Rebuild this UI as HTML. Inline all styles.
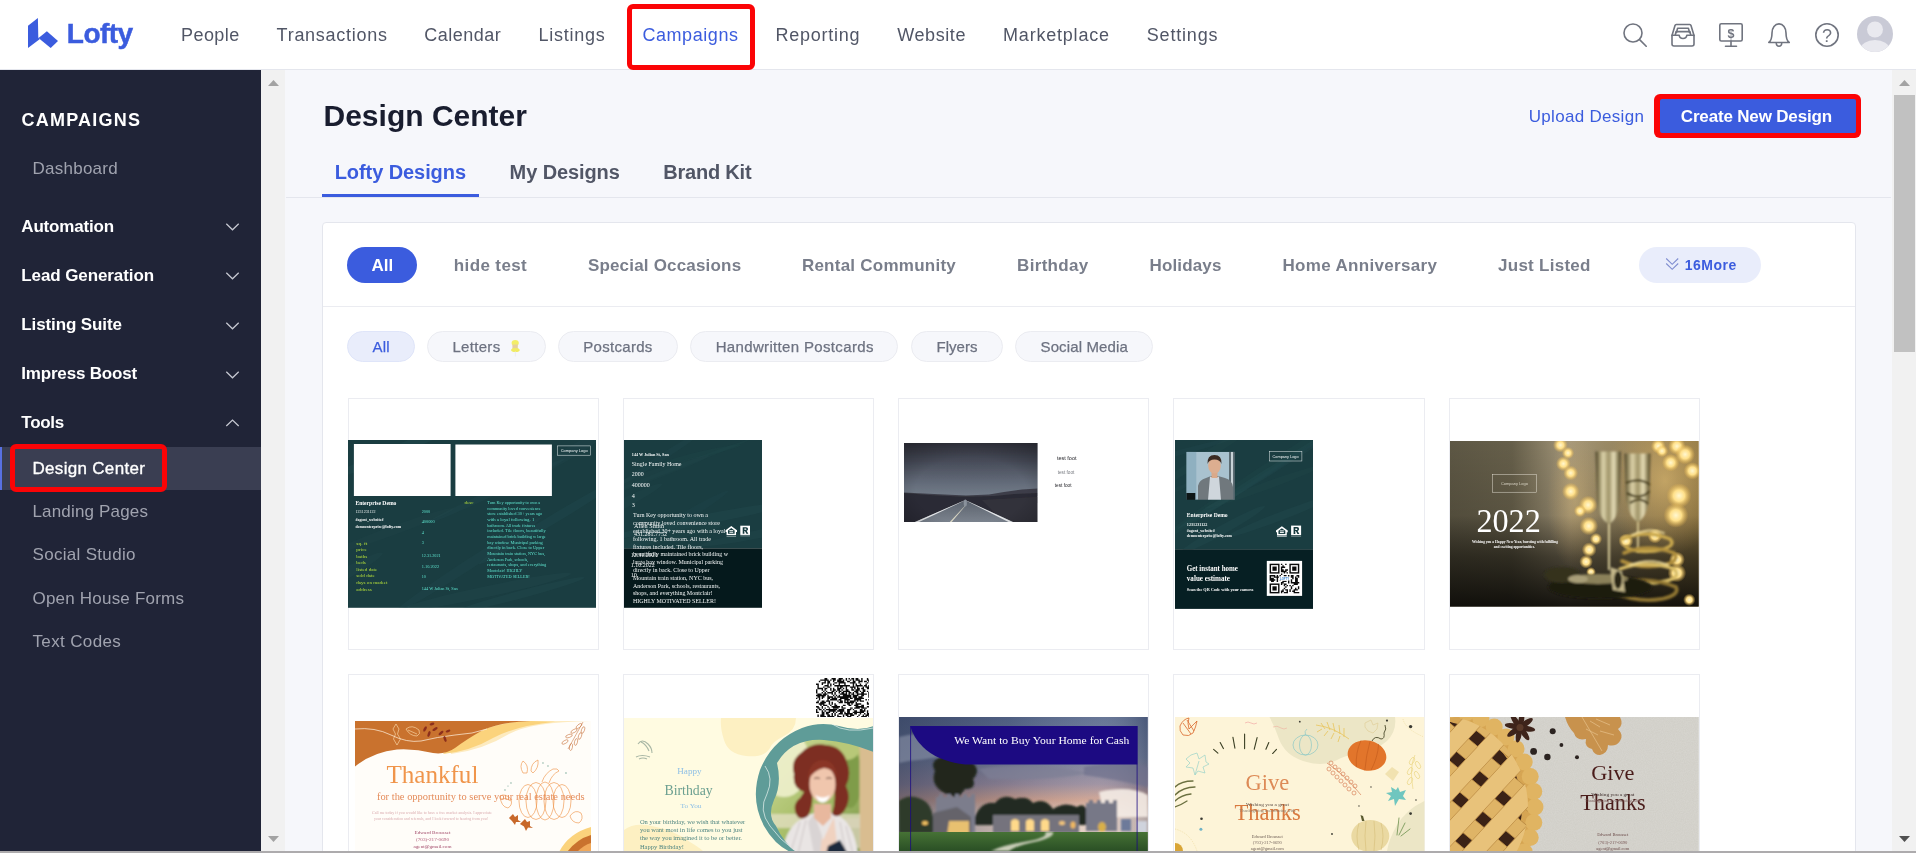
<!DOCTYPE html>
<html lang="en"><head><meta charset="utf-8"><title>Design Center</title>
<style>
html,body{margin:0;padding:0}
body{width:1916px;height:853px;overflow:hidden;position:relative;background:#f6f7fb;font-family:'Liberation Sans',sans-serif;color:#515666}
.abs{position:absolute}
svg{display:block}
</style></head><body>
<div id="app" style="position:absolute;left:0;top:0;width:1916px;height:853px;overflow:hidden;will-change:transform">
<div class="abs" style="left:0;top:0;width:1916px;height:69px;background:#fff;border-bottom:1px solid #e4e6ed"></div><svg class="abs" style="left:0;top:0" width="140" height="69" viewBox="0 0 140 69"><polygon points="28,25.700 37.900,18 38.300,37.500 39.600,39.300 28,48" fill="#3b5cde"/><polygon points="46.900,31.200 58,41 50.700,48 38.500,38" fill="#3b5cde"/></svg><span style="position:absolute;left:66.80px;top:16.00px;font:700 28px/36px 'Liberation Sans',sans-serif;letter-spacing:-0.519px;color:#3b5cde;white-space:pre;-webkit-text-stroke:0.5px #3b5cde;">Lofty</span><span style="position:absolute;left:181.00px;top:24.00px;font:400 18px/23px 'Liberation Sans',sans-serif;letter-spacing:0.443px;color:#515666;white-space:pre;">People</span><span style="position:absolute;left:276.60px;top:24.00px;font:400 18px/23px 'Liberation Sans',sans-serif;letter-spacing:0.733px;color:#515666;white-space:pre;">Transactions</span><span style="position:absolute;left:424.20px;top:24.00px;font:400 18px/23px 'Liberation Sans',sans-serif;letter-spacing:0.500px;color:#515666;white-space:pre;">Calendar</span><span style="position:absolute;left:538.40px;top:24.00px;font:400 18px/23px 'Liberation Sans',sans-serif;letter-spacing:0.769px;color:#515666;white-space:pre;">Listings</span><span style="position:absolute;left:642.40px;top:24.00px;font:400 18px/23px 'Liberation Sans',sans-serif;letter-spacing:0.571px;color:#3b5cde;white-space:pre;">Campaigns</span><span style="position:absolute;left:775.40px;top:24.00px;font:400 18px/23px 'Liberation Sans',sans-serif;letter-spacing:0.759px;color:#515666;white-space:pre;">Reporting</span><span style="position:absolute;left:897.30px;top:24.00px;font:400 18px/23px 'Liberation Sans',sans-serif;letter-spacing:0.569px;color:#515666;white-space:pre;">Website</span><span style="position:absolute;left:1003.10px;top:24.00px;font:400 18px/23px 'Liberation Sans',sans-serif;letter-spacing:0.786px;color:#515666;white-space:pre;">Marketplace</span><span style="position:absolute;left:1146.80px;top:24.00px;font:400 18px/23px 'Liberation Sans',sans-serif;letter-spacing:0.807px;color:#515666;white-space:pre;">Settings</span><div class="abs" style="left:626.8px;top:3.800px;width:128.400px;height:66.600px;box-sizing:border-box;border:5.500px solid #fb0406;border-radius:6px"></div><svg class="abs" style="left:1623px;top:23px" width="24" height="24" viewBox="0 0 24 24" fill="none" stroke="#70747f" stroke-width="1.6" stroke-linecap="round"><circle cx="10" cy="10" r="9"/><path d="M16.6 16.6L23.2 23.2"/></svg><svg class="abs" style="left:1671px;top:23px" width="24" height="24" viewBox="0 0 24 24" fill="none" stroke="#70747f" stroke-width="1.6" stroke-linejoin="round" stroke-linecap="round"><path d="M1 12.5L4 2.5Q4.3 1.5 5.3 1.5H18.7Q19.7 1.5 20 2.5L23 12.5"/><path d="M5.5 9.5L6.6 5.3H17.4L18.5 9.5"/><path d="M4.3 12L5 8.6H19L19.7 12"/><path d="M1 12.3H8.2Q8.5 15.5 12 15.5Q15.5 15.500 15.8 12.3H23V21Q23 23 21 23H3Q1 23 1 21Z"/></svg><svg class="abs" style="left:1719px;top:23px" width="24" height="24" viewBox="0 0 24 24" fill="none" stroke="#70747f" stroke-width="1.6" stroke-linecap="round" stroke-linejoin="round"><rect x="0.8" y="0.8" width="22.4" height="17.2" rx="1.5"/><path d="M12 18V23M6.500 23.2H17.5"/></svg><span style="position:absolute;left:1727.60px;top:26.00px;font:700 12.5px/16px 'Liberation Sans',sans-serif;letter-spacing:0.000px;color:#70747f;white-space:pre;">$</span><svg class="abs" style="left:1767px;top:23px" width="24" height="24" viewBox="0 0 24 24" fill="none" stroke="#70747f" stroke-width="1.6" stroke-linecap="round" stroke-linejoin="round"><path d="M1.800 19.500C4.500 17.500 5 15 5 10C5 4.500 8 0.900 12 0.900C16 0.900 19 4.500 19 10C19 15 19.500 17.500 22.200 19.500Z"/><path d="M9.300 20.500Q9.500 23.200 12 23.200Q14.500 23.200 14.700 20.500"/></svg><svg class="abs" style="left:1815px;top:23px" width="24" height="24" viewBox="0 0 24 24" fill="none" stroke="#70747f" stroke-width="1.6"><circle cx="12" cy="12" r="11.200"/></svg><span style="position:absolute;left:1822.00px;top:25.00px;font:400 18px/23px 'Liberation Sans',sans-serif;letter-spacing:0.000px;color:#70747f;white-space:pre;">?</span><svg class="abs" style="left:1857px;top:16px" width="36" height="36" viewBox="0 0 36 36"><defs><clipPath id="avc"><circle cx="18" cy="18" r="18"/></clipPath></defs><circle cx="18" cy="18" r="18" fill="#c9cad6"/><g clip-path="url(#avc)" fill="#e9e9ef"><circle cx="18" cy="13.500" r="8"/><ellipse cx="18" cy="33" rx="14.500" ry="9"/></g></svg><div class="abs" style="left:0;top:70px;width:261px;height:783px;background:#202437"></div><span style="position:absolute;left:21.50px;top:109.00px;font:700 18px/23px 'Liberation Sans',sans-serif;letter-spacing:1.239px;color:#fff;white-space:pre;">CAMPAIGNS</span><span style="position:absolute;left:32.50px;top:158.00px;font:400 17px/22px 'Liberation Sans',sans-serif;letter-spacing:0.250px;color:#a0a3af;white-space:pre;">Dashboard</span><span style="position:absolute;left:21.30px;top:216.00px;font:700 17px/22px 'Liberation Sans',sans-serif;letter-spacing:-0.183px;color:#fff;white-space:pre;">Automation</span><svg class="abs" style="left:225px;top:222px" width="15" height="10" viewBox="0 0 15 10" fill="none" stroke="#c6c8d1" stroke-width="1.250"><path d="M1.300 1.800L7.500 7.800L13.700 1.800"/></svg><span style="position:absolute;left:21.30px;top:265.00px;font:700 17px/22px 'Liberation Sans',sans-serif;letter-spacing:-0.099px;color:#fff;white-space:pre;">Lead Generation</span><svg class="abs" style="left:225px;top:271px" width="15" height="10" viewBox="0 0 15 10" fill="none" stroke="#c6c8d1" stroke-width="1.250"><path d="M1.300 1.800L7.500 7.800L13.700 1.800"/></svg><span style="position:absolute;left:21.30px;top:314.00px;font:700 17px/22px 'Liberation Sans',sans-serif;letter-spacing:-0.112px;color:#fff;white-space:pre;">Listing Suite</span><svg class="abs" style="left:225px;top:321px" width="15" height="10" viewBox="0 0 15 10" fill="none" stroke="#c6c8d1" stroke-width="1.250"><path d="M1.300 1.800L7.500 7.800L13.700 1.800"/></svg><span style="position:absolute;left:21.30px;top:363.00px;font:700 17px/22px 'Liberation Sans',sans-serif;letter-spacing:-0.191px;color:#fff;white-space:pre;">Impress Boost</span><svg class="abs" style="left:225px;top:370px" width="15" height="10" viewBox="0 0 15 10" fill="none" stroke="#c6c8d1" stroke-width="1.250"><path d="M1.300 1.800L7.500 7.800L13.700 1.800"/></svg><span style="position:absolute;left:21.30px;top:412.00px;font:700 17px/22px 'Liberation Sans',sans-serif;letter-spacing:-0.284px;color:#fff;white-space:pre;">Tools</span><svg class="abs" style="left:225px;top:418px" width="15" height="10" viewBox="0 0 15 10" fill="none" stroke="#c6c8d1" stroke-width="1.250"><path d="M1.300 8L7.500 2L13.700 8"/></svg><div class="abs" style="left:0;top:447px;width:261px;height:43px;background:#3a3e52"></div><div class="abs" style="left:0;top:447px;width:2px;height:43px;background:#5870e2"></div><div class="abs" style="left:9.900px;top:444.200px;width:157px;height:47.600px;box-sizing:border-box;border:5.500px solid #fb0406;border-radius:6px"></div><span style="position:absolute;left:32.50px;top:458.00px;font:400 17px/22px 'Liberation Sans',sans-serif;letter-spacing:0.306px;color:#fff;white-space:pre;-webkit-text-stroke:0.350px #fff;">Design Center</span><span style="position:absolute;left:32.50px;top:501.00px;font:400 17px/22px 'Liberation Sans',sans-serif;letter-spacing:0.165px;color:#a0a3af;white-space:pre;">Landing Pages</span><span style="position:absolute;left:32.50px;top:544.00px;font:400 17px/22px 'Liberation Sans',sans-serif;letter-spacing:0.309px;color:#a0a3af;white-space:pre;">Social Studio</span><span style="position:absolute;left:32.50px;top:588.00px;font:400 17px/22px 'Liberation Sans',sans-serif;letter-spacing:0.204px;color:#a0a3af;white-space:pre;">Open House Forms</span><span style="position:absolute;left:32.50px;top:631.00px;font:400 17px/22px 'Liberation Sans',sans-serif;letter-spacing:0.363px;color:#a0a3af;white-space:pre;">Text Codes</span><div class="abs" style="left:261px;top:70px;width:24px;height:783px;background:#f1f1f1"></div><svg class="abs" style="left:267px;top:79px" width="13" height="8" viewBox="0 0 13 8"><polygon points="6.500,1 12,7 1,7" fill="#a3a3a3"/></svg><svg class="abs" style="left:267px;top:835px" width="13" height="8" viewBox="0 0 13 8"><polygon points="1,1 12,1 6.500,7" fill="#a3a3a3"/></svg><div class="abs" style="left:1892px;top:70px;width:24px;height:783px;background:#f1f1f1"></div><div class="abs" style="left:1894px;top:95px;width:21px;height:257px;background:#c1c1c1"></div><svg class="abs" style="left:1898px;top:79px" width="13" height="8" viewBox="0 0 13 8"><polygon points="6.500,1 12,7 1,7" fill="#a3a3a3"/></svg><svg class="abs" style="left:1898px;top:835px" width="13" height="8" viewBox="0 0 13 8"><polygon points="1,1 12,1 6.500,7" fill="#505050"/></svg><span style="position:absolute;left:323.50px;top:96.00px;font:700 30px/39px 'Liberation Sans',sans-serif;letter-spacing:0.009px;color:#191d2f;white-space:pre;">Design Center</span><span style="position:absolute;left:1528.80px;top:106.00px;font:400 17px/22px 'Liberation Sans',sans-serif;letter-spacing:0.295px;color:#3b5cde;white-space:pre;">Upload Design</span><div class="abs" style="left:1654.400px;top:93.500px;width:206.600px;height:44.200px;background:#fb0406;border-radius:6px"></div><div class="abs" style="left:1660px;top:99px;width:195.500px;height:33.500px;background:#3b5cde;border-radius:2px"></div><span style="position:absolute;left:1680.80px;top:106.00px;font:700 17px/22px 'Liberation Sans',sans-serif;letter-spacing:-0.170px;color:#fff;white-space:pre;">Create New Design</span><div class="abs" style="left:286px;top:197px;width:1605px;height:1px;background:#e4e6ed"></div><div class="abs" style="left:322px;top:194px;width:157px;height:3px;background:#3b5cde"></div><span style="position:absolute;left:334.70px;top:159.00px;font:700 20px/26px 'Liberation Sans',sans-serif;letter-spacing:-0.076px;color:#3b5cde;white-space:pre;">Lofty Designs</span><span style="position:absolute;left:509.60px;top:159.00px;font:700 20px/26px 'Liberation Sans',sans-serif;letter-spacing:-0.101px;color:#515666;white-space:pre;">My Designs</span><span style="position:absolute;left:663.30px;top:159.00px;font:700 20px/26px 'Liberation Sans',sans-serif;letter-spacing:-0.212px;color:#515666;white-space:pre;">Brand Kit</span><div class="abs" style="left:322px;top:222px;width:1532px;height:640px;background:#fff;border:1px solid #e4e6ed;border-radius:4px"></div><div class="abs" style="left:323px;top:306px;width:1532px;height:1px;background:#ebecf1"></div><div class="abs" style="left:347px;top:247px;width:70px;height:36px;border-radius:18px;background:#3b5cde"></div><span style="position:absolute;left:371.50px;top:255.00px;font:700 17px/22px 'Liberation Sans',sans-serif;letter-spacing:-0.054px;color:#fff;white-space:pre;">All</span><span style="position:absolute;left:453.80px;top:255.00px;font:700 17px/22px 'Liberation Sans',sans-serif;letter-spacing:0.376px;color:#797e8b;white-space:pre;">hide test</span><span style="position:absolute;left:587.90px;top:255.00px;font:700 17px/22px 'Liberation Sans',sans-serif;letter-spacing:0.185px;color:#797e8b;white-space:pre;">Special Occasions</span><span style="position:absolute;left:801.90px;top:255.00px;font:700 17px/22px 'Liberation Sans',sans-serif;letter-spacing:0.246px;color:#797e8b;white-space:pre;">Rental Community</span><span style="position:absolute;left:1017.10px;top:255.00px;font:700 17px/22px 'Liberation Sans',sans-serif;letter-spacing:0.311px;color:#797e8b;white-space:pre;">Birthday</span><span style="position:absolute;left:1149.50px;top:255.00px;font:700 17px/22px 'Liberation Sans',sans-serif;letter-spacing:0.152px;color:#797e8b;white-space:pre;">Holidays</span><span style="position:absolute;left:1282.50px;top:255.00px;font:700 17px/22px 'Liberation Sans',sans-serif;letter-spacing:0.316px;color:#797e8b;white-space:pre;">Home Anniversary</span><span style="position:absolute;left:1498.00px;top:255.00px;font:700 17px/22px 'Liberation Sans',sans-serif;letter-spacing:0.271px;color:#797e8b;white-space:pre;">Just Listed</span><div class="abs" style="left:1639px;top:247px;width:122px;height:36px;border-radius:18px;background:#e9edfb"></div><svg class="abs" style="left:1665px;top:257px" width="15" height="14" viewBox="0 0 15 14" fill="none" stroke="#7f8dd0" stroke-width="1.100"><path d="M1.200 1.500L7.200 7.300L13.200 1.500M1.200 6.500L7.200 12.300L13.200 6.500"/></svg><span style="position:absolute;left:1684.70px;top:256.00px;font:700 14px/18px 'Liberation Sans',sans-serif;letter-spacing:0.503px;color:#3b5cde;white-space:pre;">16More</span><div class="abs" style="left:346.6px;top:331px;width:68.5px;height:31px;border-radius:16px;background:#e9edfb;box-sizing:border-box;border:1px solid #dfe5f9"></div><span style="position:absolute;left:372.50px;top:337.00px;font:400 15px/20px 'Liberation Sans',sans-serif;letter-spacing:0.171px;color:#3b5cde;white-space:pre;-webkit-text-stroke:0.250px currentColor;">All</span><div class="abs" style="left:427.2px;top:331px;width:118.8px;height:31px;border-radius:16px;background:#f6f7fb;box-sizing:border-box;border:1px solid #ebecf1"></div><span style="position:absolute;left:452.40px;top:337.00px;font:400 15px/20px 'Liberation Sans',sans-serif;letter-spacing:0.314px;color:#6d7281;white-space:pre;-webkit-text-stroke:0.250px currentColor;">Letters</span><div class="abs" style="left:557.8px;top:331px;width:119.9px;height:31px;border-radius:16px;background:#f6f7fb;box-sizing:border-box;border:1px solid #ebecf1"></div><span style="position:absolute;left:583.30px;top:337.00px;font:400 15px/20px 'Liberation Sans',sans-serif;letter-spacing:0.294px;color:#6d7281;white-space:pre;-webkit-text-stroke:0.250px currentColor;">Postcards</span><div class="abs" style="left:690.1px;top:331px;width:208.3px;height:31px;border-radius:16px;background:#f6f7fb;box-sizing:border-box;border:1px solid #ebecf1"></div><span style="position:absolute;left:715.70px;top:337.00px;font:400 15px/20px 'Liberation Sans',sans-serif;letter-spacing:0.341px;color:#6d7281;white-space:pre;-webkit-text-stroke:0.250px currentColor;">Handwritten Postcards</span><div class="abs" style="left:910.7px;top:331px;width:92.2px;height:31px;border-radius:16px;background:#f6f7fb;box-sizing:border-box;border:1px solid #ebecf1"></div><span style="position:absolute;left:936.60px;top:337.00px;font:400 15px/20px 'Liberation Sans',sans-serif;letter-spacing:-0.008px;color:#6d7281;white-space:pre;-webkit-text-stroke:0.250px currentColor;">Flyers</span><div class="abs" style="left:1014.6px;top:331px;width:138.4px;height:31px;border-radius:16px;background:#f6f7fb;box-sizing:border-box;border:1px solid #ebecf1"></div><span style="position:absolute;left:1040.50px;top:337.00px;font:400 15px/20px 'Liberation Sans',sans-serif;letter-spacing:0.123px;color:#6d7281;white-space:pre;-webkit-text-stroke:0.250px currentColor;">Social Media</span><svg class="abs" style="left:509px;top:338px" width="13" height="20" viewBox="0 0 13 20"><defs><filter id="pinb"><feGaussianBlur stdDeviation="0.500"/></filter></defs><g filter="url(#pinb)" opacity="0.850"><ellipse cx="6.200" cy="5" rx="3.600" ry="3" fill="#f3ec4e"/><rect x="3.400" y="6.500" width="5.400" height="4.500" fill="#e3c98c"/><ellipse cx="6.400" cy="12" rx="4.300" ry="2" fill="#f1ea48"/><rect x="5.800" y="13.500" width="1" height="5" fill="#e9e9ee"/></g></svg><div class="abs" style="left:347.5px;top:398px;width:251.3px;height:252px;box-sizing:border-box;border:1px solid #ebecf1;background:#fff"></div><div class="abs" style="left:622.8px;top:398px;width:251.3px;height:252px;box-sizing:border-box;border:1px solid #ebecf1;background:#fff"></div><div class="abs" style="left:898.1px;top:398px;width:251.3px;height:252px;box-sizing:border-box;border:1px solid #ebecf1;background:#fff"></div><div class="abs" style="left:1173.4px;top:398px;width:251.3px;height:252px;box-sizing:border-box;border:1px solid #ebecf1;background:#fff"></div><div class="abs" style="left:1448.7px;top:398px;width:251.3px;height:252px;box-sizing:border-box;border:1px solid #ebecf1;background:#fff"></div><div class="abs" style="left:347.5px;top:674px;width:251.3px;height:252px;box-sizing:border-box;border:1px solid #ebecf1;background:#fff"></div><div class="abs" style="left:622.8px;top:674px;width:251.3px;height:252px;box-sizing:border-box;border:1px solid #ebecf1;background:#fff"></div><div class="abs" style="left:898.1px;top:674px;width:251.3px;height:252px;box-sizing:border-box;border:1px solid #ebecf1;background:#fff"></div><div class="abs" style="left:1173.4px;top:674px;width:251.3px;height:252px;box-sizing:border-box;border:1px solid #ebecf1;background:#fff"></div><div class="abs" style="left:1448.7px;top:674px;width:251.3px;height:252px;box-sizing:border-box;border:1px solid #ebecf1;background:#fff"></div><svg class="abs" style="left:348.0px;top:440.0px" width="248.2" height="167.8" viewBox="0 0 248.2 167.8" ><rect width="248.200" height="167.800" fill="#1a3d41"/><ellipse cx="44" cy="91" rx="66" ry="4.5" transform="rotate(-20 44 91)" fill="#2a5358" opacity="0.11"/><ellipse cx="-16" cy="141" rx="58" ry="6.0" transform="rotate(-29 -16 141)" fill="#2a5358" opacity="0.16"/><ellipse cx="204" cy="80" rx="85" ry="4.5" transform="rotate(-31 204 80)" fill="#2a5358" opacity="0.20"/><ellipse cx="120" cy="125" rx="87" ry="5.0" transform="rotate(-33 120 125)" fill="#2a5358" opacity="0.17"/><ellipse cx="61" cy="5" rx="101" ry="4.9" transform="rotate(-23 61 5)" fill="#2a5358" opacity="0.21"/><ellipse cx="171" cy="155" rx="68" ry="3.8" transform="rotate(-15 171 155)" fill="#2a5358" opacity="0.21"/><ellipse cx="216" cy="16" rx="50" ry="5.9" transform="rotate(-30 216 16)" fill="#2a5358" opacity="0.15"/><ellipse cx="148" cy="51" rx="76" ry="3.4" transform="rotate(-25 148 51)" fill="#2a5358" opacity="0.17"/><ellipse cx="137" cy="152" rx="88" ry="5.4" transform="rotate(-12 137 152)" fill="#2a5358" opacity="0.22"/><rect x="5.900" y="4" width="96.700" height="52" fill="#fff"/><rect x="107.400" y="4.500" width="96.500" height="51.500" fill="#fff"/><rect x="209.700" y="5.900" width="33" height="9.300" fill="none" stroke="#e8efef" stroke-width="0.500"/><text x="226.2" y="12.1" font-size="4.2" font-family="Liberation Sans, sans-serif" fill="#f2f6f6" textLength="27.0" lengthAdjust="spacingAndGlyphs" text-anchor="middle" >Company Logo</text><text x="7.4" y="64.6" font-size="6.3" font-family="Liberation Serif, serif" fill="#fff" font-weight="700" textLength="41.0" lengthAdjust="spacingAndGlyphs" >Enterprise Demo</text><text x="7.6" y="72.6" font-size="3.8" font-family="Liberation Serif, serif" fill="#f0f5f5" textLength="20.0" lengthAdjust="spacingAndGlyphs" >1231231122</text><text x="7.6" y="81.2" font-size="3.8" font-family="Liberation Serif, serif" fill="#fff" font-weight="700" textLength="28.0" lengthAdjust="spacingAndGlyphs" >#agent_website#</text><text x="7.6" y="88.0" font-size="3.8" font-family="Liberation Serif, serif" fill="#fff" font-weight="700" textLength="45.5" lengthAdjust="spacingAndGlyphs" >demoenterprise@lofty.com</text><text x="8.3" y="104.7" font-size="4.3" font-family="Liberation Serif, serif" fill="#b7e23a" textLength="11.0" lengthAdjust="spacingAndGlyphs" >sq. ft</text><text x="8.3" y="111.2" font-size="4.3" font-family="Liberation Serif, serif" fill="#b7e23a" textLength="10.5" lengthAdjust="spacingAndGlyphs" >price</text><text x="8.3" y="117.7" font-size="4.3" font-family="Liberation Serif, serif" fill="#b7e23a" textLength="11.0" lengthAdjust="spacingAndGlyphs" >baths</text><text x="8.3" y="124.3" font-size="4.3" font-family="Liberation Serif, serif" fill="#b7e23a" textLength="9.5" lengthAdjust="spacingAndGlyphs" >beds</text><text x="8.3" y="130.9" font-size="4.3" font-family="Liberation Serif, serif" fill="#b7e23a" textLength="21.0" lengthAdjust="spacingAndGlyphs" >listed date</text><text x="8.3" y="137.4" font-size="4.3" font-family="Liberation Serif, serif" fill="#b7e23a" textLength="18.5" lengthAdjust="spacingAndGlyphs" >sold date</text><text x="8.3" y="144.1" font-size="4.3" font-family="Liberation Serif, serif" fill="#b7e23a" textLength="31.0" lengthAdjust="spacingAndGlyphs" >days on market</text><text x="8.3" y="150.7" font-size="4.3" font-family="Liberation Serif, serif" fill="#b7e23a" textLength="15.5" lengthAdjust="spacingAndGlyphs" >address</text><text x="73.7" y="72.7" font-size="4.2" font-family="Liberation Serif, serif" fill="#5fe6d0" textLength="8.5" lengthAdjust="spacingAndGlyphs" >2000</text><text x="73.7" y="83.0" font-size="4.2" font-family="Liberation Serif, serif" fill="#5fe6d0" textLength="13.0" lengthAdjust="spacingAndGlyphs" >400000</text><text x="73.7" y="93.9" font-size="4.2" font-family="Liberation Serif, serif" fill="#5fe6d0" >4</text><text x="73.7" y="104.4" font-size="4.2" font-family="Liberation Serif, serif" fill="#5fe6d0" >3</text><text x="73.7" y="117.4" font-size="4.2" font-family="Liberation Serif, serif" fill="#5fe6d0" textLength="19.0" lengthAdjust="spacingAndGlyphs" >12.31.2021</text><text x="73.7" y="127.7" font-size="4.2" font-family="Liberation Serif, serif" fill="#5fe6d0" textLength="17.5" lengthAdjust="spacingAndGlyphs" >1.10.2022</text><text x="73.7" y="137.9" font-size="4.2" font-family="Liberation Serif, serif" fill="#5fe6d0" >10</text><text x="73.7" y="150.4" font-size="4.2" font-family="Liberation Serif, serif" fill="#5fe6d0" textLength="36.0" lengthAdjust="spacingAndGlyphs" >144 W Julian St, San</text><text x="116.6" y="64.5" font-size="4.3" font-family="Liberation Serif, serif" fill="#b7e23a" textLength="9.0" lengthAdjust="spacingAndGlyphs" >desc</text><text x="139.3" y="64.0" font-size="4.3" font-family="Liberation Serif, serif" fill="#5fe6d0" textLength="53.0" lengthAdjust="spacingAndGlyphs" >Turn Key opportunity to own a</text><text x="139.3" y="69.7" font-size="4.3" font-family="Liberation Serif, serif" fill="#5fe6d0" textLength="53.5" lengthAdjust="spacingAndGlyphs" >community loved convenience</text><text x="139.3" y="75.3" font-size="4.3" font-family="Liberation Serif, serif" fill="#5fe6d0" textLength="55.0" lengthAdjust="spacingAndGlyphs" >store established 30+ years ago</text><text x="139.3" y="81.0" font-size="4.3" font-family="Liberation Serif, serif" fill="#5fe6d0" textLength="47.0" lengthAdjust="spacingAndGlyphs" >with a loyal following. 1</text><text x="139.3" y="86.7" font-size="4.3" font-family="Liberation Serif, serif" fill="#5fe6d0" textLength="48.0" lengthAdjust="spacingAndGlyphs" >bathroom. All trade fixtures</text><text x="139.3" y="92.3" font-size="4.3" font-family="Liberation Serif, serif" fill="#5fe6d0" textLength="58.5" lengthAdjust="spacingAndGlyphs" >included. Tile floors, beautifully</text><text x="139.3" y="98.0" font-size="4.3" font-family="Liberation Serif, serif" fill="#5fe6d0" textLength="58.5" lengthAdjust="spacingAndGlyphs" >maintained brick building w large</text><text x="139.3" y="103.7" font-size="4.3" font-family="Liberation Serif, serif" fill="#5fe6d0" textLength="55.5" lengthAdjust="spacingAndGlyphs" >bay window. Municipal parking</text><text x="139.3" y="109.4" font-size="4.3" font-family="Liberation Serif, serif" fill="#5fe6d0" textLength="57.0" lengthAdjust="spacingAndGlyphs" >directly in back. Close to Upper</text><text x="139.3" y="115.0" font-size="4.3" font-family="Liberation Serif, serif" fill="#5fe6d0" textLength="58.0" lengthAdjust="spacingAndGlyphs" >Mountain train station, NYC bus,</text><text x="139.3" y="120.7" font-size="4.3" font-family="Liberation Serif, serif" fill="#5fe6d0" textLength="41.0" lengthAdjust="spacingAndGlyphs" >Anderson Park, schools,</text><text x="139.3" y="126.4" font-size="4.3" font-family="Liberation Serif, serif" fill="#5fe6d0" textLength="59.0" lengthAdjust="spacingAndGlyphs" >restaurants, shops, and everything</text><text x="139.3" y="132.0" font-size="4.3" font-family="Liberation Serif, serif" fill="#5fe6d0" textLength="35.0" lengthAdjust="spacingAndGlyphs" >Montclair! HIGHLY</text><text x="139.3" y="137.7" font-size="4.3" font-family="Liberation Serif, serif" fill="#5fe6d0" textLength="42.5" lengthAdjust="spacingAndGlyphs" >MOTIVATED SELLER!</text></svg><svg class="abs" style="left:624.0px;top:440.0px" width="138.3" height="167.8" viewBox="0 0 138.3 167.8" ><rect width="138.300" height="108.500" fill="#1a3d41"/><ellipse cx="78" cy="80" rx="96" ry="5.0" transform="rotate(-11 78 80)" fill="#2a5358" opacity="0.21"/><ellipse cx="-15" cy="50" rx="106" ry="5.6" transform="rotate(-19 -15 50)" fill="#2a5358" opacity="0.11"/><ellipse cx="54" cy="27" rx="78" ry="2.1" transform="rotate(-21 54 27)" fill="#2a5358" opacity="0.13"/><ellipse cx="24" cy="99" rx="94" ry="5.2" transform="rotate(-31 24 99)" fill="#2a5358" opacity="0.12"/><ellipse cx="78" cy="14" rx="40" ry="2.8" transform="rotate(-13 78 14)" fill="#2a5358" opacity="0.13"/><ellipse cx="135" cy="94" rx="60" ry="4.2" transform="rotate(-11 135 94)" fill="#2a5358" opacity="0.18"/><ellipse cx="12" cy="102" rx="88" ry="5.6" transform="rotate(-11 12 102)" fill="#2a5358" opacity="0.14"/><ellipse cx="37" cy="18" rx="50" ry="3.2" transform="rotate(-33 37 18)" fill="#2a5358" opacity="0.17"/><ellipse cx="-19" cy="73" rx="64" ry="5.3" transform="rotate(-27 -19 73)" fill="#2a5358" opacity="0.16"/><rect y="108.400" width="138.300" height="59.400" fill="#05191c"/><text x="7.8" y="16.0" font-size="4.2" font-family="Liberation Serif, serif" fill="#f4f7f7" font-weight="700" textLength="37.0" lengthAdjust="spacingAndGlyphs" >144 W Julian St, San</text><text x="7.8" y="25.8" font-size="6.4" font-family="Liberation Serif, serif" fill="#f4f7f7" textLength="49.7" lengthAdjust="spacingAndGlyphs" >Single Family Home</text><text x="7.8" y="36.4" font-size="6.2" font-family="Liberation Serif, serif" fill="#f4f7f7" textLength="11.8" lengthAdjust="spacingAndGlyphs" >2000</text><text x="7.8" y="47.1" font-size="6.2" font-family="Liberation Serif, serif" fill="#f4f7f7" textLength="18.0" lengthAdjust="spacingAndGlyphs" >400000</text><text x="7.8" y="57.6" font-size="6.2" font-family="Liberation Serif, serif" fill="#f4f7f7" >4</text><text x="7.8" y="67.2" font-size="6.2" font-family="Liberation Serif, serif" fill="#f4f7f7" >3</text><text x="9.0" y="77.4" font-size="6.3" font-family="Liberation Serif, serif" fill="#f4f7f7" textLength="75.0" lengthAdjust="spacingAndGlyphs" >Turn Key opportunity to own a</text><text x="9.0" y="85.2" font-size="6.3" font-family="Liberation Serif, serif" fill="#f4f7f7" textLength="87.0" lengthAdjust="spacingAndGlyphs" >community loved convenience store</text><text x="9.0" y="93.0" font-size="6.3" font-family="Liberation Serif, serif" fill="#f4f7f7" textLength="92.5" lengthAdjust="spacingAndGlyphs" >established 30+ years ago with a loyal</text><text x="9.0" y="100.8" font-size="6.3" font-family="Liberation Serif, serif" fill="#f4f7f7" textLength="78.0" lengthAdjust="spacingAndGlyphs" >following. 1 bathroom. All trade</text><text x="9.0" y="108.6" font-size="6.3" font-family="Liberation Serif, serif" fill="#f4f7f7" textLength="70.0" lengthAdjust="spacingAndGlyphs" >fixtures included. Tile floors,</text><text x="9.0" y="116.4" font-size="6.3" font-family="Liberation Serif, serif" fill="#f4f7f7" textLength="95.0" lengthAdjust="spacingAndGlyphs" >beautifully maintained brick building w</text><text x="9.0" y="124.2" font-size="6.3" font-family="Liberation Serif, serif" fill="#f4f7f7" textLength="90.0" lengthAdjust="spacingAndGlyphs" >large bay window. Municipal parking</text><text x="9.0" y="132.0" font-size="6.3" font-family="Liberation Serif, serif" fill="#f4f7f7" textLength="76.5" lengthAdjust="spacingAndGlyphs" >directly in back. Close to Upper</text><text x="9.0" y="139.8" font-size="6.3" font-family="Liberation Serif, serif" fill="#f4f7f7" textLength="80.0" lengthAdjust="spacingAndGlyphs" >Mountain train station, NYC bus,</text><text x="9.0" y="147.6" font-size="6.3" font-family="Liberation Serif, serif" fill="#f4f7f7" textLength="87.0" lengthAdjust="spacingAndGlyphs" >Anderson Park, schools, restaurants,</text><text x="9.0" y="155.4" font-size="6.3" font-family="Liberation Serif, serif" fill="#f4f7f7" textLength="79.5" lengthAdjust="spacingAndGlyphs" >shops, and everything Montclair!</text><text x="9.0" y="163.2" font-size="6.3" font-family="Liberation Serif, serif" fill="#f4f7f7" textLength="83.0" lengthAdjust="spacingAndGlyphs" >HIGHLY MOTIVATED SELLER!</text><text x="10.0" y="88.0" font-size="6.2" font-family="Liberation Serif, serif" fill="#f4f7f7" textLength="30.0" lengthAdjust="spacingAndGlyphs" >Allen Smith</text><text x="10.0" y="96.5" font-size="6.2" font-family="Liberation Serif, serif" fill="#f4f7f7" textLength="33.0" lengthAdjust="spacingAndGlyphs" >431.281.7752</text><text x="6.7" y="117.2" font-size="6.2" font-family="Liberation Serif, serif" fill="#f4f7f7" textLength="27.0" lengthAdjust="spacingAndGlyphs" >12.31.2021</text><text x="6.7" y="127.0" font-size="6.2" font-family="Liberation Serif, serif" fill="#f4f7f7" textLength="24.0" lengthAdjust="spacingAndGlyphs" >1.10.2022</text><text x="6.7" y="137.0" font-size="6.2" font-family="Liberation Serif, serif" fill="#f4f7f7" >10</text><g transform="translate(101.6 86.1) scale(0.95)" fill="#fff"><path d="M6 0L12 4.500V6.200H11V9.500H1V6.200H0V4.500ZM6 2L2.500 4.700V8H9.500V4.700Z" fill-rule="evenodd"/><rect x="4" y="4.300" width="4" height="1"/><rect x="4" y="6" width="4" height="1"/><rect x="1" y="10.200" width="10" height="0.800" opacity="0.700"/></g><g transform="translate(116.3 85.7) scale(0.97)"><rect x="0" y="0" width="10" height="9.500" fill="#fff"/><path d="M2.500 1.500H6Q8 1.500 8 3.500Q8 5 6.500 5.300L8.300 8.300H6.300L4.800 5.500H4.200V8.300H2.500ZM4.200 2.800V4.300H5.600Q6.300 4.300 6.300 3.550Q6.300 2.800 5.600 2.800Z" fill="#163a3e" fill-rule="evenodd"/><rect x="0" y="10.200" width="10" height="0.700" fill="#fff" opacity="0.600"/></g></svg><svg class="abs" style="left:904.3px;top:442.6px" width="133.6" height="79.2" viewBox="0 0 133.6 79.2" ><defs><linearGradient id="c3s" x1="0" y1="0" x2="0" y2="1"><stop offset="0" stop-color="#32333e"/><stop offset="0.350" stop-color="#454956"/><stop offset="0.750" stop-color="#626a78"/><stop offset="1" stop-color="#737c89"/></linearGradient><linearGradient id="c3r" x1="0" y1="0" x2="0" y2="1"><stop offset="0" stop-color="#5b626d"/><stop offset="1" stop-color="#7b838e"/></linearGradient><radialGradient id="c3v" cx="0.500" cy="0.600" r="0.750"><stop offset="0.550" stop-color="#000" stop-opacity="0"/><stop offset="1" stop-color="#000" stop-opacity="0.280"/></radialGradient><filter id="b3" x="-5%" y="-5%" width="110%" height="110%"><feGaussianBlur stdDeviation="0.450"/></filter><clipPath id="c3c"><rect width="133.600" height="79.200"/></clipPath></defs><g clip-path="url(#c3c)"><g filter="url(#b3)"><rect x="-3" y="-3" width="140" height="56" fill="url(#c3s)"/><path d="M0 49.500L30 51L62 52.500L85 51.500L100 49L118 46.500L133.600 45.500V60H0Z" fill="#3d3e49"/><path d="M0 50L25 52L55 53.500L70 53.500L90 53L110 51L133.600 50V84H-4V50Z" fill="#2c2b34"/><path d="M78 57L133.600 54V79.200H100Z" fill="#33323b"/><path d="M60.300 57.500L62.300 57.500L109.500 79.200H10.300Z" fill="url(#c3r)"/><path d="M60.300 57.500L10.300 79.200H14.500L60.800 57.500Z" fill="#e6e8ea"/><path d="M62.300 57.500L109.500 79.200H105L61.800 57.500Z" fill="#e6e8ea"/><path d="M60.800 63L45.500 79.200H47.500L61.200 63Z" fill="#d9d6c4"/><ellipse cx="61.300" cy="60" rx="1.600" ry="3.500" fill="#8a929c"/></g><rect width="133.600" height="79.200" fill="url(#c3v)"/></g></svg><svg class="abs" style="left:1050.0px;top:452.0px" width="40.0" height="40.0" viewBox="0 0 40.0 40.0" ><text x="6.9" y="8.2" font-size="5.2" font-family="Liberation Sans, sans-serif" fill="#26262b" textLength="19.6" lengthAdjust="spacingAndGlyphs" >test foot</text><text x="7.7" y="22.1" font-size="4.6" font-family="Liberation Sans, sans-serif" fill="#777a80" textLength="16.7" lengthAdjust="spacingAndGlyphs" >test foot</text><text x="4.8" y="35.1" font-size="4.6" font-family="Liberation Sans, sans-serif" fill="#26262b" textLength="16.7" lengthAdjust="spacingAndGlyphs" >test foot</text></svg><svg class="abs" style="left:1175.0px;top:440.0px" width="138.0" height="168.9" viewBox="0 0 138.0 168.9" ><defs><clipPath id="c4p"><rect x="11.300" y="11.800" width="48.500" height="48"/></clipPath><filter id="b4" x="-10%" y="-10%" width="120%" height="120%"><feGaussianBlur stdDeviation="0.450"/></filter></defs><rect width="138" height="109.500" fill="#1a3d41"/><ellipse cx="31" cy="16" rx="86" ry="4.1" transform="rotate(-33 31 16)" fill="#2a5358" opacity="0.14"/><ellipse cx="-11" cy="55" rx="43" ry="2.3" transform="rotate(-24 -11 55)" fill="#2a5358" opacity="0.11"/><ellipse cx="47" cy="90" rx="49" ry="4.5" transform="rotate(-29 47 90)" fill="#2a5358" opacity="0.21"/><ellipse cx="71" cy="43" rx="108" ry="5.4" transform="rotate(-34 71 43)" fill="#2a5358" opacity="0.13"/><ellipse cx="3" cy="13" rx="62" ry="2.7" transform="rotate(-15 3 13)" fill="#2a5358" opacity="0.17"/><ellipse cx="81" cy="41" rx="78" ry="2.2" transform="rotate(-33 81 41)" fill="#2a5358" opacity="0.12"/><ellipse cx="88" cy="47" rx="62" ry="3.8" transform="rotate(-20 88 47)" fill="#2a5358" opacity="0.14"/><ellipse cx="106" cy="76" rx="57" ry="4.1" transform="rotate(-21 106 76)" fill="#2a5358" opacity="0.21"/><ellipse cx="95" cy="31" rx="109" ry="3.7" transform="rotate(-32 95 31)" fill="#2a5358" opacity="0.19"/><rect y="109.300" width="138" height="59.600" fill="#061f23"/><g clip-path="url(#c4p)"><g filter="url(#b4)"><rect x="11.300" y="11.800" width="48.500" height="48" fill="#a9c2cf"/><rect x="11.300" y="11.800" width="10" height="48" fill="#8fb0c0"/><rect x="54" y="11.800" width="6" height="48" fill="#5d6c73"/><rect x="56" y="11.800" width="2" height="48" fill="#c8d2d6"/><rect x="11.300" y="53" width="9" height="7" fill="#0d1318"/><path d="M23 60V46Q24 40 31 38L36 36H43L50 38Q57 40 58 47V60Z" fill="#6f787d"/><path d="M35 36.500L39.500 38L44 36.500L46 60H33Z" fill="#cfd6dc"/><rect x="36.500" y="30" width="6" height="8" fill="#d9a98a"/><ellipse cx="39.500" cy="25.500" rx="6.300" ry="8" fill="#dcae90"/><path d="M32.500 24Q32 15 39.500 15Q47 15 46.500 24Q45 19.500 39.500 19.500Q34 19.500 32.500 24Z" fill="#3a2a22"/></g></g><rect x="94.300" y="11.300" width="32.600" height="9.700" fill="none" stroke="#e8efef" stroke-width="0.500"/><text x="110.6" y="17.6" font-size="4.2" font-family="Liberation Sans, sans-serif" fill="#f2f6f6" textLength="26.0" lengthAdjust="spacingAndGlyphs" text-anchor="middle" >Company Logo</text><text x="11.8" y="76.7" font-size="6.3" font-family="Liberation Serif, serif" fill="#fff" font-weight="700" textLength="40.8" lengthAdjust="spacingAndGlyphs" >Enterprise Demo</text><text x="11.8" y="86.0" font-size="3.8" font-family="Liberation Serif, serif" fill="#f0f5f5" font-weight="700" textLength="20.6" lengthAdjust="spacingAndGlyphs" >1231231122</text><text x="11.8" y="91.8" font-size="3.8" font-family="Liberation Serif, serif" fill="#fff" font-weight="700" textLength="28.0" lengthAdjust="spacingAndGlyphs" >#agent_website#</text><text x="11.8" y="97.1" font-size="3.8" font-family="Liberation Serif, serif" fill="#fff" font-weight="700" textLength="44.9" lengthAdjust="spacingAndGlyphs" >demoenterprise@lofty.com</text><g transform="translate(101.0 86.2) scale(0.98)" fill="#fff"><path d="M6 0L12 4.500V6.200H11V9.500H1V6.200H0V4.500ZM6 2L2.500 4.700V8H9.500V4.700Z" fill-rule="evenodd"/><rect x="4" y="4.300" width="4" height="1"/><rect x="4" y="6" width="4" height="1"/><rect x="1" y="10.200" width="10" height="0.800" opacity="0.700"/></g><g transform="translate(116.1 85.6) scale(1.00)"><rect x="0" y="0" width="10" height="9.500" fill="#fff"/><path d="M2.500 1.500H6Q8 1.500 8 3.500Q8 5 6.500 5.300L8.300 8.300H6.300L4.800 5.500H4.200V8.300H2.500ZM4.200 2.800V4.300H5.600Q6.300 4.300 6.300 3.550Q6.300 2.800 5.600 2.800Z" fill="#163a3e" fill-rule="evenodd"/><rect x="0" y="10.200" width="10" height="0.700" fill="#fff" opacity="0.600"/></g><text x="11.8" y="131.2" font-size="7.4" font-family="Liberation Serif, serif" fill="#fff" font-weight="700" textLength="51.1" lengthAdjust="spacingAndGlyphs" >Get instant home</text><text x="11.8" y="141.1" font-size="7.4" font-family="Liberation Serif, serif" fill="#fff" font-weight="700" textLength="43.2" lengthAdjust="spacingAndGlyphs" >value estimate</text><text x="11.8" y="151.1" font-size="4.2" font-family="Liberation Serif, serif" fill="#fff" font-weight="700" textLength="66.6" lengthAdjust="spacingAndGlyphs" >Scan the QR Code with your camera</text><rect x="91.800" y="120.900" width="35.300" height="35" fill="#fff"/><path d="M105.92 123.72h1.41v1.41h-1.41zM110.16 123.72h1.41v1.41h-1.41zM107.33 125.14h1.41v1.41h-1.41zM105.92 126.55h1.41v1.41h-1.41zM107.33 126.55h1.41v1.41h-1.41zM108.74 126.55h1.41v1.41h-1.41zM105.92 127.96h1.41v1.41h-1.41zM105.92 129.37h1.41v1.41h-1.41zM107.33 129.37h1.41v1.41h-1.41zM110.16 129.37h1.41v1.41h-1.41zM111.57 129.37h1.41v1.41h-1.41zM105.92 130.78h1.41v1.41h-1.41zM107.33 130.78h1.41v1.41h-1.41zM108.74 130.78h1.41v1.41h-1.41zM110.16 130.78h1.41v1.41h-1.41zM108.74 132.20h1.41v1.41h-1.41zM111.57 132.20h1.41v1.41h-1.41zM105.92 133.61h1.41v1.41h-1.41zM94.62 135.02h1.41v1.41h-1.41zM96.04 135.02h1.41v1.41h-1.41zM97.45 135.02h1.41v1.41h-1.41zM98.86 135.02h1.41v1.41h-1.41zM101.68 135.02h1.41v1.41h-1.41zM104.51 135.02h1.41v1.41h-1.41zM108.74 135.02h1.41v1.41h-1.41zM110.16 135.02h1.41v1.41h-1.41zM112.98 135.02h1.41v1.41h-1.41zM115.80 135.02h1.41v1.41h-1.41zM117.22 135.02h1.41v1.41h-1.41zM121.45 135.02h1.41v1.41h-1.41zM122.86 135.02h1.41v1.41h-1.41zM94.62 136.43h1.41v1.41h-1.41zM98.86 136.43h1.41v1.41h-1.41zM100.27 136.43h1.41v1.41h-1.41zM101.68 136.43h1.41v1.41h-1.41zM103.10 136.43h1.41v1.41h-1.41zM112.98 136.43h1.41v1.41h-1.41zM115.80 136.43h1.41v1.41h-1.41zM117.22 136.43h1.41v1.41h-1.41zM120.04 136.43h1.41v1.41h-1.41zM122.86 136.43h1.41v1.41h-1.41zM94.62 137.84h1.41v1.41h-1.41zM96.04 137.84h1.41v1.41h-1.41zM97.45 137.84h1.41v1.41h-1.41zM101.68 137.84h1.41v1.41h-1.41zM104.51 137.84h1.41v1.41h-1.41zM112.98 137.84h1.41v1.41h-1.41zM117.22 137.84h1.41v1.41h-1.41zM120.04 137.84h1.41v1.41h-1.41zM121.45 137.84h1.41v1.41h-1.41zM94.62 139.26h1.41v1.41h-1.41zM96.04 139.26h1.41v1.41h-1.41zM97.45 139.26h1.41v1.41h-1.41zM98.86 139.26h1.41v1.41h-1.41zM101.68 139.26h1.41v1.41h-1.41zM104.51 139.26h1.41v1.41h-1.41zM112.98 139.26h1.41v1.41h-1.41zM115.80 139.26h1.41v1.41h-1.41zM120.04 139.26h1.41v1.41h-1.41zM121.45 139.26h1.41v1.41h-1.41zM96.04 140.67h1.41v1.41h-1.41zM97.45 140.67h1.41v1.41h-1.41zM101.68 140.67h1.41v1.41h-1.41zM107.33 140.67h1.41v1.41h-1.41zM108.74 140.67h1.41v1.41h-1.41zM110.16 140.67h1.41v1.41h-1.41zM112.98 140.67h1.41v1.41h-1.41zM115.80 140.67h1.41v1.41h-1.41zM120.04 140.67h1.41v1.41h-1.41zM121.45 140.67h1.41v1.41h-1.41zM105.92 142.08h1.41v1.41h-1.41zM107.33 142.08h1.41v1.41h-1.41zM112.98 142.08h1.41v1.41h-1.41zM115.80 142.08h1.41v1.41h-1.41zM117.22 142.08h1.41v1.41h-1.41zM118.63 142.08h1.41v1.41h-1.41zM120.04 142.08h1.41v1.41h-1.41zM121.45 142.08h1.41v1.41h-1.41zM122.86 142.08h1.41v1.41h-1.41zM105.92 143.49h1.41v1.41h-1.41zM108.74 143.49h1.41v1.41h-1.41zM110.16 143.49h1.41v1.41h-1.41zM118.63 143.49h1.41v1.41h-1.41zM120.04 143.49h1.41v1.41h-1.41zM121.45 143.49h1.41v1.41h-1.41zM108.74 144.90h1.41v1.41h-1.41zM111.57 144.90h1.41v1.41h-1.41zM114.39 144.90h1.41v1.41h-1.41zM117.22 144.90h1.41v1.41h-1.41zM110.16 146.32h1.41v1.41h-1.41zM115.80 146.32h1.41v1.41h-1.41zM122.86 146.32h1.41v1.41h-1.41zM108.74 147.73h1.41v1.41h-1.41zM115.80 147.73h1.41v1.41h-1.41zM120.04 147.73h1.41v1.41h-1.41zM122.86 147.73h1.41v1.41h-1.41zM107.33 149.14h1.41v1.41h-1.41zM110.16 149.14h1.41v1.41h-1.41zM111.57 149.14h1.41v1.41h-1.41zM114.39 149.14h1.41v1.41h-1.41zM118.63 149.14h1.41v1.41h-1.41zM120.04 149.14h1.41v1.41h-1.41zM121.45 149.14h1.41v1.41h-1.41zM105.92 150.55h1.41v1.41h-1.41zM107.33 150.55h1.41v1.41h-1.41zM111.57 150.55h1.41v1.41h-1.41zM114.39 150.55h1.41v1.41h-1.41zM117.22 150.55h1.41v1.41h-1.41zM118.63 150.55h1.41v1.41h-1.41zM105.92 151.96h1.41v1.41h-1.41zM108.74 151.96h1.41v1.41h-1.41zM110.16 151.96h1.41v1.41h-1.41zM111.57 151.96h1.41v1.41h-1.41zM118.63 151.96h1.41v1.41h-1.41zM120.04 151.96h1.41v1.41h-1.41zM121.45 151.96h1.41v1.41h-1.41zM122.86 151.96h1.41v1.41h-1.41z" fill="#0a0a0a"/><rect x="94.62" y="123.72" width="9.88" height="9.88" fill="#0a0a0a"/><rect x="96.04" y="125.14" width="7.06" height="7.06" fill="#fff"/><rect x="97.45" y="126.55" width="4.24" height="4.24" fill="#0a0a0a"/><rect x="114.39" y="123.72" width="9.88" height="9.88" fill="#0a0a0a"/><rect x="115.80" y="125.14" width="7.06" height="7.06" fill="#fff"/><rect x="117.22" y="126.55" width="4.24" height="4.24" fill="#0a0a0a"/><rect x="94.62" y="143.49" width="9.88" height="9.88" fill="#0a0a0a"/><rect x="96.04" y="144.90" width="7.06" height="7.06" fill="#fff"/><rect x="97.45" y="146.32" width="4.24" height="4.24" fill="#0a0a0a"/><rect x="104" y="136.500" width="11" height="4" fill="#fff"/><text x="109.5" y="139.7" font-size="3" font-family="Liberation Sans, sans-serif" fill="#2f7fd0" font-weight="700" textLength="9.0" lengthAdjust="spacingAndGlyphs" text-anchor="middle" >LOFTY</text></svg><svg class="abs" style="left:1450.0px;top:441.2px" width="248.7" height="165.6" viewBox="0 0 248.7 165.6" ><defs><linearGradient id="c5a" x1="0" y1="0" x2="1" y2="0"><stop offset="0" stop-color="#5d5744"/><stop offset="0.250" stop-color="#665f4a"/><stop offset="0.480" stop-color="#a5987b"/><stop offset="0.620" stop-color="#9a8a66"/><stop offset="1" stop-color="#8f7846"/></linearGradient><linearGradient id="c5b" x1="0" y1="0" x2="0" y2="1"><stop offset="0" stop-color="#000" stop-opacity="0"/><stop offset="0.450" stop-color="#000" stop-opacity="0.120"/><stop offset="0.700" stop-color="#0c0b07" stop-opacity="0.600"/><stop offset="1" stop-color="#0a0906" stop-opacity="0.920"/></linearGradient><radialGradient id="bk"><stop offset="0" stop-color="#fff7d0"/><stop offset="0.450" stop-color="#ffe08a"/><stop offset="1" stop-color="#e9b64a" stop-opacity="0"/></radialGradient><linearGradient id="gl" x1="0" y1="0" x2="1" y2="0"><stop offset="0" stop-color="#3d3620"/><stop offset="0.130" stop-color="#8a8058"/><stop offset="0.300" stop-color="#e4dbb2"/><stop offset="0.520" stop-color="#9f9468"/><stop offset="0.720" stop-color="#efe7c2"/><stop offset="0.880" stop-color="#8a8058"/><stop offset="1" stop-color="#3d3620"/></linearGradient><radialGradient id="c5g"><stop offset="0" stop-color="#f0c878" stop-opacity="0.550"/><stop offset="1" stop-color="#e0b060" stop-opacity="0"/></radialGradient><filter id="bl1"><feGaussianBlur stdDeviation="1.200"/></filter></defs><rect width="248.700" height="165.600" fill="url(#c5a)"/><rect width="248.700" height="165.600" fill="url(#c5b)"/><ellipse cx="215" cy="40" rx="60" ry="75" fill="url(#c5g)"/><ellipse cx="125" cy="60" rx="28" ry="70" fill="url(#c5g)" opacity="0.600"/><circle cx="110.4" cy="4.1" r="7.5" fill="url(#bk)"/><circle cx="113.4" cy="22.7" r="7.5" fill="url(#bk)"/><circle cx="120.7" cy="32.0" r="7.5" fill="url(#bk)"/><circle cx="120.7" cy="50.5" r="8.8" fill="url(#bk)"/><circle cx="138.2" cy="64.0" r="9.4" fill="url(#bk)"/><circle cx="138.8" cy="85.0" r="9.4" fill="url(#bk)"/><circle cx="139.2" cy="108.7" r="7.5" fill="url(#bk)"/><circle cx="136.1" cy="120.7" r="6.9" fill="url(#bk)"/><circle cx="141.0" cy="131.0" r="5.0" fill="url(#bk)"/><circle cx="208.3" cy="5.2" r="7.5" fill="url(#bk)"/><circle cx="226.9" cy="5.2" r="8.8" fill="url(#bk)"/><circle cx="235.1" cy="13.4" r="10.0" fill="url(#bk)"/><circle cx="242.4" cy="29.9" r="8.8" fill="url(#bk)"/><circle cx="220.7" cy="21.7" r="8.8" fill="url(#bk)"/><circle cx="229.0" cy="54.7" r="12.5" fill="url(#bk)"/><circle cx="225.9" cy="74.3" r="12.5" fill="url(#bk)"/><circle cx="226.9" cy="118.6" r="8.1" fill="url(#bk)"/><circle cx="226.9" cy="132.0" r="9.4" fill="url(#bk)"/><circle cx="239.3" cy="158.8" r="6.2" fill="url(#bk)"/><circle cx="212.0" cy="10.0" r="6.2" fill="url(#bk)"/><circle cx="118.0" cy="12.0" r="6.2" fill="url(#bk)"/><circle cx="130.0" cy="70.0" r="6.2" fill="url(#bk)"/><circle cx="146.0" cy="98.0" r="6.2" fill="url(#bk)"/><circle cx="176.0" cy="100.0" r="7.5" fill="url(#bk)"/><circle cx="205.0" cy="95.0" r="7.5" fill="url(#bk)"/><g filter="url(#bl1)"><path d="M145.500 10.500H171L169.500 60Q168 78 159 83.500Q149 78 147 60Z" fill="url(#gl)" opacity="0.920"/><rect x="158" y="83" width="2" height="46" fill="#d8cc9a"/><path d="M174.500 12.500H200.500L199.500 55Q198 75 188 81.500Q177.500 75 176 55Z" fill="url(#gl)" opacity="0.900"/><rect x="187" y="81" width="2" height="30" fill="#cfc08a"/><path d="M176 42Q190 36 200 44M177 52Q190 60 199.500 50M180 62Q190 55 198 63" stroke="#4a3f1c" stroke-width="2.200" fill="none"/></g><g filter="url(#bl1)" fill="none" stroke-linecap="round"><path d="M172 98Q196 88 220 98Q226 104 214 108Q190 114 176 106" stroke="#c9a84e" stroke-width="3.400"/><path d="M174 112Q198 102 224 112Q230 120 214 124Q190 128 172 120" stroke="#b08f3c" stroke-width="3.600"/><path d="M170 128Q196 118 224 128Q232 136 216 140Q190 146 170 136" stroke="#d9bd66" stroke-width="3.400"/><path d="M168 144Q196 134 226 146Q230 154 212 158Q188 162 166 152" stroke="#8f7430" stroke-width="3.800"/><path d="M182 94Q200 86 214 92" stroke="#efdc9a" stroke-width="1.600"/><path d="M180 124Q200 116 218 124" stroke="#f1e0a0" stroke-width="1.400"/></g><g filter="url(#bl1)"><ellipse cx="150" cy="146" rx="52" ry="12" fill="#1c1a10"/><ellipse cx="148" cy="138" rx="30" ry="5" fill="#8b815a"/><path d="M160 126L172 130L175 151L163 149Z" fill="#c2b688"/><ellipse cx="168" cy="139" rx="4" ry="9" fill="#2a2616"/><ellipse cx="112" cy="134" rx="18" ry="8" fill="#34321f"/><ellipse cx="128" cy="138" rx="10" ry="4" fill="#a99f78"/></g><rect x="42.300" y="33.400" width="44.300" height="17.800" fill="none" stroke="#efece0" stroke-width="0.450"/><text x="64.4" y="43.6" font-size="3.4" font-family="Liberation Sans, sans-serif" fill="#d9d4c4" textLength="27.0" lengthAdjust="spacingAndGlyphs" text-anchor="middle" >Company Logo</text><text x="26.4" y="91.0" font-size="33" font-family="Liberation Serif, serif" fill="#fff" textLength="64.4" lengthAdjust="spacingAndGlyphs" >2022</text><text x="22.0" y="102.3" font-size="4.1" font-family="Liberation Serif, serif" fill="#fff" font-weight="700" textLength="85.9" lengthAdjust="spacingAndGlyphs" >Wishing you a Happy New Year, bursting with fulfilling</text><text x="43.7" y="107.1" font-size="4.1" font-family="Liberation Serif, serif" fill="#fff" font-weight="700" textLength="41.3" lengthAdjust="spacingAndGlyphs" >and exciting opportunities.</text></svg><svg class="abs" style="left:355.0px;top:721.2px" width="236.2" height="131.0" viewBox="0 0 236.2 131.0" ><rect width="236.200" height="131" fill="#fffdf9"/><path d="M96 33Q128 29 154 13Q176 1 236.200 0V0H90Z" fill="#fdebc0"/><path d="M88 33Q116 30 138 17Q160 5 200 0.800L176 0Q140 0 100 20Z" fill="#fbd37c"/><path d="M0 0H176Q146 1 128 9Q112 18 100 27Q90 34 78 32Q60 27.500 42 28.500Q18 31 0 45.500Z" fill="#c9722e"/><path d="M0 8Q20 6 36 14Q52 22 66 20Q82 16 100 14Q118 13 132 8" stroke="#fff4e2" stroke-width="0.700" fill="none"/><g fill="none" stroke="#ffe3b5" stroke-width="0.600"><path d="M41 3L44 8L42.500 13L45.500 18L42 24L38.500 18L40.500 13L38 8Z"/><path d="M51 8Q57 3 64 9Q66 13 62 15Q55 15 51 8ZM53 9L62 13"/></g><g fill="#8c2f1c"><ellipse cx="70" cy="8" rx="1.300" ry="3" transform="rotate(30 70 8)"/><ellipse cx="74" cy="13" rx="1.300" ry="3" transform="rotate(20 74 13)"/><ellipse cx="80" cy="8" rx="1.300" ry="3" transform="rotate(60 80 8)"/><ellipse cx="86" cy="12" rx="1.300" ry="3" transform="rotate(50 86 12)"/><ellipse cx="90" cy="18" rx="1.300" ry="3" transform="rotate(-20 90 18)"/><ellipse cx="77" cy="3" rx="1.300" ry="2.500" transform="rotate(70 77 3)"/><ellipse cx="93" cy="10" rx="1.200" ry="2.500" transform="rotate(70 93 10)"/></g><g fill="none" stroke="#c7703a" stroke-width="0.550"><path d="M228 1Q222 12 213 28"/><ellipse cx="224" cy="5" rx="1.500" ry="3.500" transform="rotate(50 224 5)"/><ellipse cx="228" cy="9" rx="1.500" ry="3.500" transform="rotate(20 228 9)"/><ellipse cx="219" cy="10" rx="1.500" ry="3.500" transform="rotate(60 219 10)"/><ellipse cx="225" cy="15" rx="1.500" ry="3.500" transform="rotate(20 225 15)"/><ellipse cx="214" cy="15" rx="1.500" ry="3.500" transform="rotate(70 214 15)"/><ellipse cx="221" cy="21" rx="1.500" ry="3.500" transform="rotate(15 221 21)"/><ellipse cx="210" cy="21" rx="1.500" ry="3.500" transform="rotate(60 210 21)"/><ellipse cx="216" cy="26" rx="1.500" ry="3.500" transform="rotate(10 216 26)"/></g><g fill="none" stroke="#f0964c" stroke-width="0.650"><ellipse cx="190" cy="80" rx="9" ry="19"/><ellipse cx="181" cy="80" rx="10" ry="18.500"/><ellipse cx="199" cy="80" rx="10" ry="18.500"/><ellipse cx="173" cy="80" rx="9" ry="16.500"/><ellipse cx="207" cy="80" rx="9" ry="16.500"/><path d="M187 61Q190 52 198 48Q203 47 204 50Q197 53 194 62"/><path d="M168 52Q164 45 168 40Q174 44 172 52ZM176 50Q176 42 183 39Q184 47 178 52Z"/><path d="M145 75Q150 72 156 78Q158 84 153 87Q146 86 145 75ZM146 78Q151 76 156 80"/><path d="M215 95Q220 88 226 92Q229 98 224 102Q217 102 215 95Z"/></g><g fill="#7aa89a"><circle cx="188" cy="42" r="0.700"/><circle cx="193" cy="45" r="0.700"/><circle cx="211" cy="52" r="0.800"/><circle cx="156" cy="62" r="0.700"/><circle cx="150" cy="69" r="0.700"/><circle cx="153" cy="65" r="0.600"/></g><path d="M154 97L158 93L160 96L163 94L163 99L166 101L161 101L160 104L157 100Z" fill="#c8682a"/><path d="M165 103L170 98L172 101L175 100L175 105L178 107L173 106.500L171 110L169 105.500Z" fill="#c8682a"/><path d="M204 131Q214 112 236.200 106V131Z" fill="#fbd37c"/><path d="M212 131Q222 118 236.200 114V131Z" fill="#c9722e"/><path d="M222 131Q229 124 236.200 122V131Z" fill="#f0a85a"/><text x="31.4" y="61.8" font-size="26" font-family="Liberation Serif, serif" fill="#f0954b" textLength="92.0" lengthAdjust="spacingAndGlyphs" >Thankful</text><text x="21.9" y="78.6" font-size="10.3" font-family="Liberation Serif, serif" fill="#e58c5b" textLength="207.6" lengthAdjust="spacingAndGlyphs" >for the opportunity to serve your real estate needs</text><text x="17.0" y="93.0" font-size="3.6" font-family="Liberation Serif, serif" fill="#d9a9ad" textLength="120.0" lengthAdjust="spacingAndGlyphs" >Call me today if you would like to have a free market analysis. I appreciate</text><text x="19.0" y="98.7" font-size="3.6" font-family="Liberation Serif, serif" fill="#d9a9ad" textLength="114.0" lengthAdjust="spacingAndGlyphs" >your consideration and referrals, and I look forward to hearing from you!</text><text x="77.5" y="112.6" font-size="5" font-family="Liberation Serif, serif" fill="#a24a6a" textLength="36.0" lengthAdjust="spacingAndGlyphs" text-anchor="middle" >Edward Brousset</text><text x="77.5" y="119.7" font-size="5" font-family="Liberation Serif, serif" fill="#b05a78" textLength="33.0" lengthAdjust="spacingAndGlyphs" text-anchor="middle" >(703)-217-0690</text><text x="77.5" y="126.8" font-size="5" font-family="Liberation Serif, serif" fill="#a24a6a" textLength="38.0" lengthAdjust="spacingAndGlyphs" text-anchor="middle" >agent@gmail.com</text></svg><svg class="abs" style="left:815.7px;top:677.9px" width="53.7" height="39.3" viewBox="0 0 53.7 39.3" ><rect width="53.700" height="39.300" fill="#fff"/><path d="M8.48 0.00h1.41v1.40h-1.41zM9.89 0.00h1.41v1.40h-1.41zM15.54 0.00h1.41v1.40h-1.41zM16.96 0.00h1.41v1.40h-1.41zM18.37 0.00h1.41v1.40h-1.41zM22.61 0.00h1.41v1.40h-1.41zM24.02 0.00h1.41v1.40h-1.41zM25.44 0.00h1.41v1.40h-1.41zM29.68 0.00h1.41v1.40h-1.41zM32.50 0.00h1.41v1.40h-1.41zM35.33 0.00h1.41v1.40h-1.41zM36.74 0.00h1.41v1.40h-1.41zM39.57 0.00h1.41v1.40h-1.41zM40.98 0.00h1.41v1.40h-1.41zM45.22 0.00h1.41v1.40h-1.41zM50.87 0.00h1.41v1.40h-1.41zM4.24 1.40h1.41v1.40h-1.41zM5.65 1.40h1.41v1.40h-1.41zM7.07 1.40h1.41v1.40h-1.41zM8.48 1.40h1.41v1.40h-1.41zM9.89 1.40h1.41v1.40h-1.41zM11.31 1.40h1.41v1.40h-1.41zM14.13 1.40h1.41v1.40h-1.41zM16.96 1.40h1.41v1.40h-1.41zM18.37 1.40h1.41v1.40h-1.41zM21.20 1.40h1.41v1.40h-1.41zM22.61 1.40h1.41v1.40h-1.41zM24.02 1.40h1.41v1.40h-1.41zM26.85 1.40h1.41v1.40h-1.41zM29.68 1.40h1.41v1.40h-1.41zM33.92 1.40h1.41v1.40h-1.41zM36.74 1.40h1.41v1.40h-1.41zM39.57 1.40h1.41v1.40h-1.41zM40.98 1.40h1.41v1.40h-1.41zM42.39 1.40h1.41v1.40h-1.41zM45.22 1.40h1.41v1.40h-1.41zM50.87 1.40h1.41v1.40h-1.41zM52.29 1.40h1.41v1.40h-1.41zM2.83 2.81h1.41v1.40h-1.41zM8.48 2.81h1.41v1.40h-1.41zM11.31 2.81h1.41v1.40h-1.41zM12.72 2.81h1.41v1.40h-1.41zM16.96 2.81h1.41v1.40h-1.41zM21.20 2.81h1.41v1.40h-1.41zM22.61 2.81h1.41v1.40h-1.41zM24.02 2.81h1.41v1.40h-1.41zM25.44 2.81h1.41v1.40h-1.41zM26.85 2.81h1.41v1.40h-1.41zM31.09 2.81h1.41v1.40h-1.41zM32.50 2.81h1.41v1.40h-1.41zM36.74 2.81h1.41v1.40h-1.41zM38.16 2.81h1.41v1.40h-1.41zM42.39 2.81h1.41v1.40h-1.41zM43.81 2.81h1.41v1.40h-1.41zM45.22 2.81h1.41v1.40h-1.41zM48.05 2.81h1.41v1.40h-1.41zM49.46 2.81h1.41v1.40h-1.41zM52.29 2.81h1.41v1.40h-1.41zM5.65 4.21h1.41v1.40h-1.41zM7.07 4.21h1.41v1.40h-1.41zM8.48 4.21h1.41v1.40h-1.41zM11.31 4.21h1.41v1.40h-1.41zM12.72 4.21h1.41v1.40h-1.41zM18.37 4.21h1.41v1.40h-1.41zM19.78 4.21h1.41v1.40h-1.41zM22.61 4.21h1.41v1.40h-1.41zM24.02 4.21h1.41v1.40h-1.41zM25.44 4.21h1.41v1.40h-1.41zM26.85 4.21h1.41v1.40h-1.41zM28.26 4.21h1.41v1.40h-1.41zM33.92 4.21h1.41v1.40h-1.41zM35.33 4.21h1.41v1.40h-1.41zM36.74 4.21h1.41v1.40h-1.41zM38.16 4.21h1.41v1.40h-1.41zM42.39 4.21h1.41v1.40h-1.41zM50.87 4.21h1.41v1.40h-1.41zM0.00 5.61h1.41v1.40h-1.41zM1.41 5.61h1.41v1.40h-1.41zM5.65 5.61h1.41v1.40h-1.41zM11.31 5.61h1.41v1.40h-1.41zM14.13 5.61h1.41v1.40h-1.41zM16.96 5.61h1.41v1.40h-1.41zM22.61 5.61h1.41v1.40h-1.41zM28.26 5.61h1.41v1.40h-1.41zM36.74 5.61h1.41v1.40h-1.41zM39.57 5.61h1.41v1.40h-1.41zM43.81 5.61h1.41v1.40h-1.41zM49.46 5.61h1.41v1.40h-1.41zM1.41 7.02h1.41v1.40h-1.41zM8.48 7.02h1.41v1.40h-1.41zM9.89 7.02h1.41v1.40h-1.41zM11.31 7.02h1.41v1.40h-1.41zM14.13 7.02h1.41v1.40h-1.41zM18.37 7.02h1.41v1.40h-1.41zM19.78 7.02h1.41v1.40h-1.41zM21.20 7.02h1.41v1.40h-1.41zM22.61 7.02h1.41v1.40h-1.41zM24.02 7.02h1.41v1.40h-1.41zM25.44 7.02h1.41v1.40h-1.41zM26.85 7.02h1.41v1.40h-1.41zM28.26 7.02h1.41v1.40h-1.41zM29.68 7.02h1.41v1.40h-1.41zM31.09 7.02h1.41v1.40h-1.41zM32.50 7.02h1.41v1.40h-1.41zM36.74 7.02h1.41v1.40h-1.41zM39.57 7.02h1.41v1.40h-1.41zM40.98 7.02h1.41v1.40h-1.41zM42.39 7.02h1.41v1.40h-1.41zM43.81 7.02h1.41v1.40h-1.41zM45.22 7.02h1.41v1.40h-1.41zM48.05 7.02h1.41v1.40h-1.41zM49.46 7.02h1.41v1.40h-1.41zM52.29 7.02h1.41v1.40h-1.41zM1.41 8.42h1.41v1.40h-1.41zM7.07 8.42h1.41v1.40h-1.41zM11.31 8.42h1.41v1.40h-1.41zM12.72 8.42h1.41v1.40h-1.41zM21.20 8.42h1.41v1.40h-1.41zM24.02 8.42h1.41v1.40h-1.41zM25.44 8.42h1.41v1.40h-1.41zM29.68 8.42h1.41v1.40h-1.41zM33.92 8.42h1.41v1.40h-1.41zM35.33 8.42h1.41v1.40h-1.41zM36.74 8.42h1.41v1.40h-1.41zM38.16 8.42h1.41v1.40h-1.41zM40.98 8.42h1.41v1.40h-1.41zM46.63 8.42h1.41v1.40h-1.41zM49.46 8.42h1.41v1.40h-1.41zM50.87 8.42h1.41v1.40h-1.41zM52.29 8.42h1.41v1.40h-1.41zM1.41 9.82h1.41v1.40h-1.41zM2.83 9.82h1.41v1.40h-1.41zM4.24 9.82h1.41v1.40h-1.41zM5.65 9.82h1.41v1.40h-1.41zM8.48 9.82h1.41v1.40h-1.41zM9.89 9.82h1.41v1.40h-1.41zM14.13 9.82h1.41v1.40h-1.41zM16.96 9.82h1.41v1.40h-1.41zM21.20 9.82h1.41v1.40h-1.41zM22.61 9.82h1.41v1.40h-1.41zM24.02 9.82h1.41v1.40h-1.41zM26.85 9.82h1.41v1.40h-1.41zM29.68 9.82h1.41v1.40h-1.41zM35.33 9.82h1.41v1.40h-1.41zM38.16 9.82h1.41v1.40h-1.41zM40.98 9.82h1.41v1.40h-1.41zM42.39 9.82h1.41v1.40h-1.41zM45.22 9.82h1.41v1.40h-1.41zM46.63 9.82h1.41v1.40h-1.41zM50.87 9.82h1.41v1.40h-1.41zM52.29 9.82h1.41v1.40h-1.41zM0.00 11.23h1.41v1.40h-1.41zM5.65 11.23h1.41v1.40h-1.41zM8.48 11.23h1.41v1.40h-1.41zM14.13 11.23h1.41v1.40h-1.41zM16.96 11.23h1.41v1.40h-1.41zM18.37 11.23h1.41v1.40h-1.41zM21.20 11.23h1.41v1.40h-1.41zM22.61 11.23h1.41v1.40h-1.41zM25.44 11.23h1.41v1.40h-1.41zM29.68 11.23h1.41v1.40h-1.41zM31.09 11.23h1.41v1.40h-1.41zM35.33 11.23h1.41v1.40h-1.41zM36.74 11.23h1.41v1.40h-1.41zM39.57 11.23h1.41v1.40h-1.41zM40.98 11.23h1.41v1.40h-1.41zM42.39 11.23h1.41v1.40h-1.41zM46.63 11.23h1.41v1.40h-1.41zM48.05 11.23h1.41v1.40h-1.41zM0.00 12.63h1.41v1.40h-1.41zM7.07 12.63h1.41v1.40h-1.41zM9.89 12.63h1.41v1.40h-1.41zM15.54 12.63h1.41v1.40h-1.41zM16.96 12.63h1.41v1.40h-1.41zM19.78 12.63h1.41v1.40h-1.41zM22.61 12.63h1.41v1.40h-1.41zM24.02 12.63h1.41v1.40h-1.41zM26.85 12.63h1.41v1.40h-1.41zM28.26 12.63h1.41v1.40h-1.41zM29.68 12.63h1.41v1.40h-1.41zM31.09 12.63h1.41v1.40h-1.41zM32.50 12.63h1.41v1.40h-1.41zM38.16 12.63h1.41v1.40h-1.41zM39.57 12.63h1.41v1.40h-1.41zM40.98 12.63h1.41v1.40h-1.41zM43.81 12.63h1.41v1.40h-1.41zM46.63 12.63h1.41v1.40h-1.41zM48.05 12.63h1.41v1.40h-1.41zM50.87 12.63h1.41v1.40h-1.41zM0.00 14.04h1.41v1.40h-1.41zM5.65 14.04h1.41v1.40h-1.41zM8.48 14.04h1.41v1.40h-1.41zM11.31 14.04h1.41v1.40h-1.41zM12.72 14.04h1.41v1.40h-1.41zM14.13 14.04h1.41v1.40h-1.41zM15.54 14.04h1.41v1.40h-1.41zM18.37 14.04h1.41v1.40h-1.41zM22.61 14.04h1.41v1.40h-1.41zM25.44 14.04h1.41v1.40h-1.41zM26.85 14.04h1.41v1.40h-1.41zM29.68 14.04h1.41v1.40h-1.41zM32.50 14.04h1.41v1.40h-1.41zM33.92 14.04h1.41v1.40h-1.41zM36.74 14.04h1.41v1.40h-1.41zM39.57 14.04h1.41v1.40h-1.41zM40.98 14.04h1.41v1.40h-1.41zM45.22 14.04h1.41v1.40h-1.41zM46.63 14.04h1.41v1.40h-1.41zM52.29 14.04h1.41v1.40h-1.41zM1.41 15.44h1.41v1.40h-1.41zM2.83 15.44h1.41v1.40h-1.41zM4.24 15.44h1.41v1.40h-1.41zM7.07 15.44h1.41v1.40h-1.41zM8.48 15.44h1.41v1.40h-1.41zM9.89 15.44h1.41v1.40h-1.41zM15.54 15.44h1.41v1.40h-1.41zM18.37 15.44h1.41v1.40h-1.41zM24.02 15.44h1.41v1.40h-1.41zM25.44 15.44h1.41v1.40h-1.41zM26.85 15.44h1.41v1.40h-1.41zM28.26 15.44h1.41v1.40h-1.41zM29.68 15.44h1.41v1.40h-1.41zM32.50 15.44h1.41v1.40h-1.41zM35.33 15.44h1.41v1.40h-1.41zM36.74 15.44h1.41v1.40h-1.41zM40.98 15.44h1.41v1.40h-1.41zM42.39 15.44h1.41v1.40h-1.41zM43.81 15.44h1.41v1.40h-1.41zM45.22 15.44h1.41v1.40h-1.41zM46.63 15.44h1.41v1.40h-1.41zM48.05 15.44h1.41v1.40h-1.41zM49.46 15.44h1.41v1.40h-1.41zM52.29 15.44h1.41v1.40h-1.41zM0.00 16.84h1.41v1.40h-1.41zM1.41 16.84h1.41v1.40h-1.41zM2.83 16.84h1.41v1.40h-1.41zM4.24 16.84h1.41v1.40h-1.41zM5.65 16.84h1.41v1.40h-1.41zM7.07 16.84h1.41v1.40h-1.41zM8.48 16.84h1.41v1.40h-1.41zM11.31 16.84h1.41v1.40h-1.41zM16.96 16.84h1.41v1.40h-1.41zM19.78 16.84h1.41v1.40h-1.41zM22.61 16.84h1.41v1.40h-1.41zM26.85 16.84h1.41v1.40h-1.41zM28.26 16.84h1.41v1.40h-1.41zM29.68 16.84h1.41v1.40h-1.41zM31.09 16.84h1.41v1.40h-1.41zM32.50 16.84h1.41v1.40h-1.41zM33.92 16.84h1.41v1.40h-1.41zM36.74 16.84h1.41v1.40h-1.41zM38.16 16.84h1.41v1.40h-1.41zM39.57 16.84h1.41v1.40h-1.41zM40.98 16.84h1.41v1.40h-1.41zM45.22 16.84h1.41v1.40h-1.41zM46.63 16.84h1.41v1.40h-1.41zM52.29 16.84h1.41v1.40h-1.41zM1.41 18.25h1.41v1.40h-1.41zM2.83 18.25h1.41v1.40h-1.41zM5.65 18.25h1.41v1.40h-1.41zM7.07 18.25h1.41v1.40h-1.41zM11.31 18.25h1.41v1.40h-1.41zM12.72 18.25h1.41v1.40h-1.41zM14.13 18.25h1.41v1.40h-1.41zM15.54 18.25h1.41v1.40h-1.41zM18.37 18.25h1.41v1.40h-1.41zM21.20 18.25h1.41v1.40h-1.41zM22.61 18.25h1.41v1.40h-1.41zM24.02 18.25h1.41v1.40h-1.41zM25.44 18.25h1.41v1.40h-1.41zM26.85 18.25h1.41v1.40h-1.41zM28.26 18.25h1.41v1.40h-1.41zM29.68 18.25h1.41v1.40h-1.41zM31.09 18.25h1.41v1.40h-1.41zM32.50 18.25h1.41v1.40h-1.41zM33.92 18.25h1.41v1.40h-1.41zM36.74 18.25h1.41v1.40h-1.41zM38.16 18.25h1.41v1.40h-1.41zM39.57 18.25h1.41v1.40h-1.41zM42.39 18.25h1.41v1.40h-1.41zM43.81 18.25h1.41v1.40h-1.41zM45.22 18.25h1.41v1.40h-1.41zM52.29 18.25h1.41v1.40h-1.41zM0.00 19.65h1.41v1.40h-1.41zM2.83 19.65h1.41v1.40h-1.41zM5.65 19.65h1.41v1.40h-1.41zM11.31 19.65h1.41v1.40h-1.41zM12.72 19.65h1.41v1.40h-1.41zM15.54 19.65h1.41v1.40h-1.41zM16.96 19.65h1.41v1.40h-1.41zM18.37 19.65h1.41v1.40h-1.41zM19.78 19.65h1.41v1.40h-1.41zM24.02 19.65h1.41v1.40h-1.41zM25.44 19.65h1.41v1.40h-1.41zM26.85 19.65h1.41v1.40h-1.41zM28.26 19.65h1.41v1.40h-1.41zM29.68 19.65h1.41v1.40h-1.41zM31.09 19.65h1.41v1.40h-1.41zM33.92 19.65h1.41v1.40h-1.41zM35.33 19.65h1.41v1.40h-1.41zM38.16 19.65h1.41v1.40h-1.41zM39.57 19.65h1.41v1.40h-1.41zM40.98 19.65h1.41v1.40h-1.41zM42.39 19.65h1.41v1.40h-1.41zM43.81 19.65h1.41v1.40h-1.41zM45.22 19.65h1.41v1.40h-1.41zM46.63 19.65h1.41v1.40h-1.41zM2.83 21.05h1.41v1.40h-1.41zM11.31 21.05h1.41v1.40h-1.41zM14.13 21.05h1.41v1.40h-1.41zM15.54 21.05h1.41v1.40h-1.41zM16.96 21.05h1.41v1.40h-1.41zM18.37 21.05h1.41v1.40h-1.41zM19.78 21.05h1.41v1.40h-1.41zM22.61 21.05h1.41v1.40h-1.41zM24.02 21.05h1.41v1.40h-1.41zM28.26 21.05h1.41v1.40h-1.41zM29.68 21.05h1.41v1.40h-1.41zM31.09 21.05h1.41v1.40h-1.41zM32.50 21.05h1.41v1.40h-1.41zM38.16 21.05h1.41v1.40h-1.41zM39.57 21.05h1.41v1.40h-1.41zM40.98 21.05h1.41v1.40h-1.41zM42.39 21.05h1.41v1.40h-1.41zM43.81 21.05h1.41v1.40h-1.41zM49.46 21.05h1.41v1.40h-1.41zM52.29 21.05h1.41v1.40h-1.41zM1.41 22.46h1.41v1.40h-1.41zM5.65 22.46h1.41v1.40h-1.41zM7.07 22.46h1.41v1.40h-1.41zM9.89 22.46h1.41v1.40h-1.41zM11.31 22.46h1.41v1.40h-1.41zM12.72 22.46h1.41v1.40h-1.41zM21.20 22.46h1.41v1.40h-1.41zM24.02 22.46h1.41v1.40h-1.41zM25.44 22.46h1.41v1.40h-1.41zM28.26 22.46h1.41v1.40h-1.41zM31.09 22.46h1.41v1.40h-1.41zM33.92 22.46h1.41v1.40h-1.41zM35.33 22.46h1.41v1.40h-1.41zM36.74 22.46h1.41v1.40h-1.41zM38.16 22.46h1.41v1.40h-1.41zM40.98 22.46h1.41v1.40h-1.41zM43.81 22.46h1.41v1.40h-1.41zM45.22 22.46h1.41v1.40h-1.41zM46.63 22.46h1.41v1.40h-1.41zM0.00 23.86h1.41v1.40h-1.41zM1.41 23.86h1.41v1.40h-1.41zM4.24 23.86h1.41v1.40h-1.41zM5.65 23.86h1.41v1.40h-1.41zM7.07 23.86h1.41v1.40h-1.41zM8.48 23.86h1.41v1.40h-1.41zM12.72 23.86h1.41v1.40h-1.41zM15.54 23.86h1.41v1.40h-1.41zM22.61 23.86h1.41v1.40h-1.41zM24.02 23.86h1.41v1.40h-1.41zM25.44 23.86h1.41v1.40h-1.41zM28.26 23.86h1.41v1.40h-1.41zM29.68 23.86h1.41v1.40h-1.41zM31.09 23.86h1.41v1.40h-1.41zM32.50 23.86h1.41v1.40h-1.41zM33.92 23.86h1.41v1.40h-1.41zM35.33 23.86h1.41v1.40h-1.41zM36.74 23.86h1.41v1.40h-1.41zM39.57 23.86h1.41v1.40h-1.41zM50.87 23.86h1.41v1.40h-1.41zM2.83 25.26h1.41v1.40h-1.41zM4.24 25.26h1.41v1.40h-1.41zM5.65 25.26h1.41v1.40h-1.41zM7.07 25.26h1.41v1.40h-1.41zM12.72 25.26h1.41v1.40h-1.41zM15.54 25.26h1.41v1.40h-1.41zM18.37 25.26h1.41v1.40h-1.41zM31.09 25.26h1.41v1.40h-1.41zM32.50 25.26h1.41v1.40h-1.41zM35.33 25.26h1.41v1.40h-1.41zM39.57 25.26h1.41v1.40h-1.41zM40.98 25.26h1.41v1.40h-1.41zM42.39 25.26h1.41v1.40h-1.41zM43.81 25.26h1.41v1.40h-1.41zM50.87 25.26h1.41v1.40h-1.41zM52.29 25.26h1.41v1.40h-1.41zM4.24 26.67h1.41v1.40h-1.41zM7.07 26.67h1.41v1.40h-1.41zM8.48 26.67h1.41v1.40h-1.41zM9.89 26.67h1.41v1.40h-1.41zM14.13 26.67h1.41v1.40h-1.41zM18.37 26.67h1.41v1.40h-1.41zM19.78 26.67h1.41v1.40h-1.41zM26.85 26.67h1.41v1.40h-1.41zM28.26 26.67h1.41v1.40h-1.41zM32.50 26.67h1.41v1.40h-1.41zM33.92 26.67h1.41v1.40h-1.41zM38.16 26.67h1.41v1.40h-1.41zM39.57 26.67h1.41v1.40h-1.41zM40.98 26.67h1.41v1.40h-1.41zM45.22 26.67h1.41v1.40h-1.41zM46.63 26.67h1.41v1.40h-1.41zM0.00 28.07h1.41v1.40h-1.41zM1.41 28.07h1.41v1.40h-1.41zM5.65 28.07h1.41v1.40h-1.41zM11.31 28.07h1.41v1.40h-1.41zM15.54 28.07h1.41v1.40h-1.41zM16.96 28.07h1.41v1.40h-1.41zM18.37 28.07h1.41v1.40h-1.41zM19.78 28.07h1.41v1.40h-1.41zM21.20 28.07h1.41v1.40h-1.41zM22.61 28.07h1.41v1.40h-1.41zM25.44 28.07h1.41v1.40h-1.41zM39.57 28.07h1.41v1.40h-1.41zM40.98 28.07h1.41v1.40h-1.41zM42.39 28.07h1.41v1.40h-1.41zM43.81 28.07h1.41v1.40h-1.41zM45.22 28.07h1.41v1.40h-1.41zM46.63 28.07h1.41v1.40h-1.41zM50.87 28.07h1.41v1.40h-1.41zM52.29 28.07h1.41v1.40h-1.41zM1.41 29.47h1.41v1.40h-1.41zM2.83 29.47h1.41v1.40h-1.41zM5.65 29.47h1.41v1.40h-1.41zM8.48 29.47h1.41v1.40h-1.41zM12.72 29.47h1.41v1.40h-1.41zM16.96 29.47h1.41v1.40h-1.41zM18.37 29.47h1.41v1.40h-1.41zM19.78 29.47h1.41v1.40h-1.41zM21.20 29.47h1.41v1.40h-1.41zM25.44 29.47h1.41v1.40h-1.41zM26.85 29.47h1.41v1.40h-1.41zM28.26 29.47h1.41v1.40h-1.41zM33.92 29.47h1.41v1.40h-1.41zM35.33 29.47h1.41v1.40h-1.41zM38.16 29.47h1.41v1.40h-1.41zM39.57 29.47h1.41v1.40h-1.41zM40.98 29.47h1.41v1.40h-1.41zM42.39 29.47h1.41v1.40h-1.41zM45.22 29.47h1.41v1.40h-1.41zM46.63 29.47h1.41v1.40h-1.41zM48.05 29.47h1.41v1.40h-1.41zM49.46 29.47h1.41v1.40h-1.41zM0.00 30.88h1.41v1.40h-1.41zM2.83 30.88h1.41v1.40h-1.41zM4.24 30.88h1.41v1.40h-1.41zM7.07 30.88h1.41v1.40h-1.41zM9.89 30.88h1.41v1.40h-1.41zM11.31 30.88h1.41v1.40h-1.41zM12.72 30.88h1.41v1.40h-1.41zM14.13 30.88h1.41v1.40h-1.41zM15.54 30.88h1.41v1.40h-1.41zM16.96 30.88h1.41v1.40h-1.41zM18.37 30.88h1.41v1.40h-1.41zM19.78 30.88h1.41v1.40h-1.41zM22.61 30.88h1.41v1.40h-1.41zM24.02 30.88h1.41v1.40h-1.41zM25.44 30.88h1.41v1.40h-1.41zM26.85 30.88h1.41v1.40h-1.41zM31.09 30.88h1.41v1.40h-1.41zM32.50 30.88h1.41v1.40h-1.41zM33.92 30.88h1.41v1.40h-1.41zM36.74 30.88h1.41v1.40h-1.41zM43.81 30.88h1.41v1.40h-1.41zM45.22 30.88h1.41v1.40h-1.41zM48.05 30.88h1.41v1.40h-1.41zM0.00 32.28h1.41v1.40h-1.41zM5.65 32.28h1.41v1.40h-1.41zM8.48 32.28h1.41v1.40h-1.41zM12.72 32.28h1.41v1.40h-1.41zM14.13 32.28h1.41v1.40h-1.41zM15.54 32.28h1.41v1.40h-1.41zM16.96 32.28h1.41v1.40h-1.41zM18.37 32.28h1.41v1.40h-1.41zM21.20 32.28h1.41v1.40h-1.41zM22.61 32.28h1.41v1.40h-1.41zM24.02 32.28h1.41v1.40h-1.41zM25.44 32.28h1.41v1.40h-1.41zM26.85 32.28h1.41v1.40h-1.41zM31.09 32.28h1.41v1.40h-1.41zM32.50 32.28h1.41v1.40h-1.41zM38.16 32.28h1.41v1.40h-1.41zM39.57 32.28h1.41v1.40h-1.41zM43.81 32.28h1.41v1.40h-1.41zM45.22 32.28h1.41v1.40h-1.41zM46.63 32.28h1.41v1.40h-1.41zM48.05 32.28h1.41v1.40h-1.41zM50.87 32.28h1.41v1.40h-1.41zM0.00 33.69h1.41v1.40h-1.41zM1.41 33.69h1.41v1.40h-1.41zM5.65 33.69h1.41v1.40h-1.41zM7.07 33.69h1.41v1.40h-1.41zM9.89 33.69h1.41v1.40h-1.41zM11.31 33.69h1.41v1.40h-1.41zM12.72 33.69h1.41v1.40h-1.41zM16.96 33.69h1.41v1.40h-1.41zM19.78 33.69h1.41v1.40h-1.41zM24.02 33.69h1.41v1.40h-1.41zM25.44 33.69h1.41v1.40h-1.41zM28.26 33.69h1.41v1.40h-1.41zM31.09 33.69h1.41v1.40h-1.41zM32.50 33.69h1.41v1.40h-1.41zM36.74 33.69h1.41v1.40h-1.41zM38.16 33.69h1.41v1.40h-1.41zM39.57 33.69h1.41v1.40h-1.41zM40.98 33.69h1.41v1.40h-1.41zM42.39 33.69h1.41v1.40h-1.41zM43.81 33.69h1.41v1.40h-1.41zM45.22 33.69h1.41v1.40h-1.41zM46.63 33.69h1.41v1.40h-1.41zM50.87 33.69h1.41v1.40h-1.41zM5.65 35.09h1.41v1.40h-1.41zM7.07 35.09h1.41v1.40h-1.41zM9.89 35.09h1.41v1.40h-1.41zM11.31 35.09h1.41v1.40h-1.41zM15.54 35.09h1.41v1.40h-1.41zM18.37 35.09h1.41v1.40h-1.41zM22.61 35.09h1.41v1.40h-1.41zM24.02 35.09h1.41v1.40h-1.41zM25.44 35.09h1.41v1.40h-1.41zM28.26 35.09h1.41v1.40h-1.41zM29.68 35.09h1.41v1.40h-1.41zM31.09 35.09h1.41v1.40h-1.41zM32.50 35.09h1.41v1.40h-1.41zM33.92 35.09h1.41v1.40h-1.41zM35.33 35.09h1.41v1.40h-1.41zM38.16 35.09h1.41v1.40h-1.41zM39.57 35.09h1.41v1.40h-1.41zM43.81 35.09h1.41v1.40h-1.41zM48.05 35.09h1.41v1.40h-1.41zM50.87 35.09h1.41v1.40h-1.41zM52.29 35.09h1.41v1.40h-1.41zM1.41 36.49h1.41v1.40h-1.41zM4.24 36.49h1.41v1.40h-1.41zM5.65 36.49h1.41v1.40h-1.41zM7.07 36.49h1.41v1.40h-1.41zM11.31 36.49h1.41v1.40h-1.41zM12.72 36.49h1.41v1.40h-1.41zM15.54 36.49h1.41v1.40h-1.41zM18.37 36.49h1.41v1.40h-1.41zM21.20 36.49h1.41v1.40h-1.41zM26.85 36.49h1.41v1.40h-1.41zM29.68 36.49h1.41v1.40h-1.41zM31.09 36.49h1.41v1.40h-1.41zM33.92 36.49h1.41v1.40h-1.41zM35.33 36.49h1.41v1.40h-1.41zM36.74 36.49h1.41v1.40h-1.41zM42.39 36.49h1.41v1.40h-1.41zM46.63 36.49h1.41v1.40h-1.41zM49.46 36.49h1.41v1.40h-1.41zM50.87 36.49h1.41v1.40h-1.41zM52.29 36.49h1.41v1.40h-1.41zM1.41 37.90h1.41v1.40h-1.41zM4.24 37.90h1.41v1.40h-1.41zM5.65 37.90h1.41v1.40h-1.41zM7.07 37.90h1.41v1.40h-1.41zM8.48 37.90h1.41v1.40h-1.41zM11.31 37.90h1.41v1.40h-1.41zM12.72 37.90h1.41v1.40h-1.41zM14.13 37.90h1.41v1.40h-1.41zM15.54 37.90h1.41v1.40h-1.41zM16.96 37.90h1.41v1.40h-1.41zM21.20 37.90h1.41v1.40h-1.41zM22.61 37.90h1.41v1.40h-1.41zM24.02 37.90h1.41v1.40h-1.41zM26.85 37.90h1.41v1.40h-1.41zM31.09 37.90h1.41v1.40h-1.41zM32.50 37.90h1.41v1.40h-1.41zM33.92 37.90h1.41v1.40h-1.41zM40.98 37.90h1.41v1.40h-1.41zM45.22 37.90h1.41v1.40h-1.41zM46.63 37.90h1.41v1.40h-1.41zM48.05 37.90h1.41v1.40h-1.41zM49.46 37.90h1.41v1.40h-1.41zM52.29 37.90h1.41v1.40h-1.41z" fill="#0b0b0b"/></svg><svg class="abs" style="left:623.6px;top:717.6px" width="249.4" height="134.0" viewBox="0 0 249.4 134.0" ><defs><clipPath id="c7p"><path d="M153 45Q168 20 200 22Q225 24 249.400 34V134H172Q160 125 152 108Q143 98 150 82Q158 66 153 45Z"/></clipPath><filter id="b7"><feGaussianBlur stdDeviation="0.800"/></filter><linearGradient id="c7g" x1="0" y1="0" x2="1" y2="1"><stop offset="0" stop-color="#d9e3a8"/><stop offset="0.500" stop-color="#a9bf6a"/><stop offset="1" stop-color="#6f8f45"/></linearGradient></defs><rect width="249.400" height="134" fill="#fffbe1"/><path d="M97 0H172Q172 12 160 18Q148 24 146 30Q140 40 122 38Q104 36 100 22Q96 10 97 0Z" fill="#fdf0c2"/><path d="M0 112Q10 104 28 108Q50 112 66 124Q76 130 80 134H0Z" fill="#fdf0c2"/><path d="M249.400 8Q235 14 215 8Q196 3 178 10Q148 22 136 52Q126 82 140 108Q150 126 166 134H249.400Z" fill="#5f9c98"/><path d="M141 48Q150 60 143 76Q134 92 146 108Q156 122 170 132" stroke="#e9f4ef" stroke-width="0.700" fill="none"/><path d="M208 6Q222 16 249.400 10" stroke="#e9f4ef" stroke-width="0.700" fill="none"/><g clip-path="url(#c7p)"><g filter="url(#b7)"><rect x="135" y="10" width="120" height="130" fill="url(#c7g)"/><ellipse cx="160" cy="45" rx="26" ry="34" fill="#eef0cc" opacity="0.900"/><ellipse cx="226" cy="60" rx="12" ry="30" fill="#7f9c4a"/><ellipse cx="222" cy="30" rx="14" ry="12" fill="#b8c878"/><rect x="235.500" y="10" width="16" height="130" fill="#d9bd90"/><rect x="140" y="96" width="96" height="14" fill="#e9e2cc" opacity="0.700"/><rect x="222" y="100" width="14" height="30" fill="#d8d2b8" opacity="0.800"/><path d="M158 136Q162 106 182 99L196 92L212 96Q230 104 234 136Z" fill="#e9e5e4"/><path d="M166 136L176 104M174 136L182 102M222 136L216 104M229 136L222 108" stroke="#c9c2c2" stroke-width="0.900" fill="none"/><path d="M190 97L199 122L210 99L214 136H192Z" fill="#f0d2c0"/><path d="M204 128L216 122L224 136H202Z" fill="#1d2c3c"/><path d="M190 96L198 118L196 136H190L184 104Z" fill="#d9d4d4"/><path d="M190 86H207V100L199 108L190 100Z" fill="#e8b89e"/><path d="M180 74Q168 70 170 56Q166 42 178 34Q188 24 202 27Q218 28 223 44Q228 56 222 68Q228 80 221 92Q214 102 208 96Q212 84 210 70L188 70Q190 88 184 98Q176 104 172 96Q168 86 176 80Z" fill="#7d2f22"/><ellipse cx="198.500" cy="66" rx="13" ry="18.500" fill="#f0c6ad"/><path d="M184 62Q184 44 198 42Q212 42 213 60Q208 50 200 50Q190 52 184 62Z" fill="#8a3526"/><path d="M191.500 77Q198.500 82 206 77Q203 84.500 198.500 84.500Q194 84.500 191.500 77Z" fill="#fff"/><path d="M190 60.500Q193 59 196 60.500M202 60.500Q205 59 208 60.500" stroke="#5a3a30" stroke-width="1" fill="none"/></g></g><g fill="none" stroke="#a9b7a5" stroke-width="1.100"><path d="M14 26Q18 20 24 26Q28 30 28 35"/><path d="M17 24Q22 26 25 33"/><path d="M12 39Q18 36 26 39"/><path d="M15 41Q19 39 23 41"/></g><text x="65.4" y="55.6" font-size="8" font-family="Liberation Serif, serif" fill="#8fc0e6" textLength="24.2" lengthAdjust="spacingAndGlyphs" text-anchor="middle" >Happy</text><text x="64.6" y="76.8" font-size="14.2" font-family="Liberation Serif, serif" fill="#6b9f90" textLength="48.2" lengthAdjust="spacingAndGlyphs" text-anchor="middle" >Birthday</text><text x="67.0" y="89.8" font-size="7" font-family="Liberation Serif, serif" fill="#8fc0e6" textLength="21.0" lengthAdjust="spacingAndGlyphs" text-anchor="middle" >To You</text><text x="15.9" y="105.6" font-size="6.2" font-family="Liberation Serif, serif" fill="#4f8581" textLength="105.3" lengthAdjust="spacingAndGlyphs" >On your birthday, we wish that whatever</text><text x="15.9" y="114.0" font-size="6.2" font-family="Liberation Serif, serif" fill="#4f8581" textLength="102.7" lengthAdjust="spacingAndGlyphs" >you want most in life comes to you just</text><text x="15.9" y="122.4" font-size="6.2" font-family="Liberation Serif, serif" fill="#4f8581" textLength="102.0" lengthAdjust="spacingAndGlyphs" >the way you imagined it to be or better.</text><text x="15.9" y="130.8" font-size="6.2" font-family="Liberation Serif, serif" fill="#4f8581" textLength="44.0" lengthAdjust="spacingAndGlyphs" >Happy Birthday!</text></svg><svg class="abs" style="left:899.2px;top:717.2px" width="248.8" height="134.0" viewBox="0 0 248.8 134.0" ><defs><linearGradient id="c8s" x1="0" y1="0" x2="0" y2="1"><stop offset="0" stop-color="#55668a"/><stop offset="0.300" stop-color="#6c7996"/><stop offset="0.500" stop-color="#97899a"/><stop offset="0.620" stop-color="#cfa08c"/><stop offset="0.740" stop-color="#e6cfc2"/></linearGradient><linearGradient id="c8l" x1="0" y1="0" x2="0" y2="1"><stop offset="0" stop-color="#467235"/><stop offset="1" stop-color="#2a4f25"/></linearGradient><linearGradient id="c8d" x1="0" y1="0" x2="1" y2="0"><stop offset="0" stop-color="#2a3450" stop-opacity="0.550"/><stop offset="0.450" stop-color="#2a3450" stop-opacity="0.150"/><stop offset="0.800" stop-color="#fff" stop-opacity="0.100"/><stop offset="1" stop-color="#2a3450" stop-opacity="0.300"/></linearGradient><filter id="b8" x="-5%" y="-5%" width="110%" height="110%"><feGaussianBlur stdDeviation="0.900"/></filter></defs><rect width="248.800" height="134" fill="url(#c8s)"/><rect width="248.800" height="134" fill="url(#c8d)"/><g filter="url(#b8)"><path d="M0 20Q40 10 80 22Q60 40 10 44L0 46Z" fill="#8a93a8" opacity="0.600"/><path d="M80 52Q130 44 190 56Q150 64 90 62Z" fill="#7d7f96" opacity="0.700"/><path d="M185 50Q220 42 248.800 50V70Q215 62 185 58Z" fill="#6d6f8c" opacity="0.700"/><path d="M200 75Q230 68 248.800 78V100H205Z" fill="#f4ece6" opacity="0.900"/><path d="M0 84Q10 76 22 82Q32 86 34 100V116H0Z" fill="#2d3a2a"/><path d="M76 100Q82 84 96 86Q104 76 116 82Q128 78 134 86Q146 80 154 92Q166 84 178 90Q186 84 190 98V108H76Z" fill="#232b22"/><path d="M50 78Q30 70 36 54Q30 44 42 40Q46 30 58 36Q72 34 74 46Q82 54 74 62Q78 72 66 72L60 80Z" fill="#20281f"/><rect x="54" y="70" width="3" height="16" fill="#20281f"/><path d="M37 80H40V77H44V80H48V77H52V80H56V77H60V80H64V77H68V80H72V77H76V116H37Z" fill="#7b7d8c"/><path d="M34 96L58 90L72 100V118H34Z" fill="#65636a"/><path d="M50 104H70V118H48Z" fill="#e8c070"/><rect x="94" y="98" width="86" height="18" fill="#74737d"/><path d="M112 104Q116 100 120 104V114H112ZM127 104Q131 100 135 104V114H127ZM142 104Q146 100 150 104V114H142Z" fill="#ffd98a"/><ellipse cx="163" cy="106" rx="3" ry="2" fill="#f3c57a"/><ellipse cx="174" cy="108" rx="2.500" ry="3.500" fill="#f0b860"/><path d="M187 86H190V83H194V86H198V83H202V86H206V83H210V86H214V83H218V114H187Z" fill="#777887"/><ellipse cx="203" cy="110" rx="4" ry="5" fill="#d9b04a"/><rect x="222" y="102" width="10" height="12" fill="#6d7a9a"/><rect x="238" y="104" width="10" height="12" fill="#cfd3dd"/><ellipse cx="26" cy="106" rx="3" ry="2" fill="#f2c060"/></g><rect y="115" width="248.800" height="19" fill="url(#c8l)"/><path d="M146 115Q150 120 130 124Q104 128 92 134H110Q118 128 140 124Q156 120 154 115Z" fill="#c9cdb8" filter="url(#b8)"/><path d="M11.300 8.900H238.400V47.500H66Q38 44 24 30Q14 20 11.300 8.900Z" fill="#1c0a82"/><path d="M11.600 9V134M238.100 9V134" stroke="#1c0a82" stroke-width="0.800" fill="none"/><text x="55.2" y="27.0" font-size="10.6" font-family="Liberation Serif, serif" fill="#fff" textLength="175.1" lengthAdjust="spacingAndGlyphs" >We Want to Buy Your Home for Cash</text></svg><svg class="abs" style="left:1175.2px;top:717.2px" width="249.4" height="134.0" viewBox="0 0 249.4 134.0" ><rect width="249.400" height="134" fill="#fdf4d8"/><path d="M94.500 0H220Q222 14 212 24Q200 34 186 36Q170 38 160 44Q146 50 128 44Q110 38 104 22Q100 10 94.500 0Z" fill="#ece6c6"/><path d="M249.400 84Q232 92 222 108Q214 122 212 134H249.400Z" fill="#ece6c6"/><g transform="rotate(12 192 38.500)"><ellipse cx="192" cy="38.500" rx="19.500" ry="15" fill="#e2752b"/><path d="M183 25Q180 38 184 52M192 24Q191 38 193 53.500M201 25Q203 38 199 52" stroke="#c9601f" stroke-width="0.700" fill="none"/></g><path d="M197 24Q200 18 206 22Q210 22 209 16Q212 12 210 8" stroke="#4a4a2a" stroke-width="0.900" fill="none"/><ellipse cx="195.300" cy="119" rx="19" ry="16" fill="#ead9a2"/><path d="M184 106Q180 119 184 133M191 104Q189 119 191 134M199 104Q201 119 199 134M206 106Q210 119 206 133" stroke="#d9c27e" stroke-width="0.700" fill="none"/><path d="M187 104L185.500 98L188 99L189.500 104Z" fill="#5a5a30"/><g stroke="#3b3f24" stroke-width="1.100" stroke-linecap="round"><path d="M38.600 32.300L42.900 36.100M45.200 25.500L48.400 31.600M57.900 20.200L59.900 31.200M69.600 17L69.600 31.600M82.100 20.600L79.200 32.300M93.800 25.500L90.900 32.300M101.500 32.300L97.600 36.500"/></g><g fill="none" stroke="#d9682c" stroke-width="0.800"><path d="M5 9Q8 2 14 1Q12 6 14 12Q18 8 22 4Q21 10 18 16Q14 20 8 18Q4 14 5 9Z"/><path d="M8 6L16 17M12 3L19 14"/></g><g fill="none" stroke="#9ad2c8" stroke-width="0.700"><path d="M16 38L22 36L24 42L30 38L31 45L34 47L28 50L30 56L23 54L20 58L18 51L11 50L15 46L11 42Z"/><path d="M20 58L24 44"/></g><g fill="none" stroke="#6b7040" stroke-width="1.300" stroke-linecap="round"><path d="M0 70Q6 64 18 64M0 78Q8 70 20 70M0 84Q6 78 16 77M0 90Q6 88 12 84"/></g><g fill="none" stroke="#8cc9c6" stroke-width="0.700"><ellipse cx="130.500" cy="28" rx="12.500" ry="10"/><ellipse cx="130.500" cy="28" rx="6" ry="10"/><path d="M130.500 18Q129 14 132 12"/></g><g fill="none" stroke="#e8c45a" stroke-width="0.800"><path d="M141 8Q158 10 174 22"/><path d="M146 6L150 12M152 5L155 13M158 6L160 15M164 8L165 17M169 11L169 20M147 12L142 15M153 14L149 19M159 16L156 22M165 19L163 25"/></g><g fill="none" stroke="#e0cf9a" stroke-width="0.700"><path d="M190 6L196 3L198 8L203 6L202 12L198 16L193 14L190 10Z"/></g><g fill="none" stroke="#d9835a" stroke-width="0.700"><path d="M152 46Q170 58 186 78"/><circle cx="156" cy="46" r="2"/><circle cx="160" cy="50" r="2"/><circle cx="164" cy="53" r="2"/><circle cx="168" cy="57" r="2"/><circle cx="172" cy="61" r="2"/><circle cx="176" cy="65" r="2"/><circle cx="180" cy="69" r="2"/><circle cx="154" cy="52" r="2"/><circle cx="158" cy="56" r="2"/><circle cx="162" cy="60" r="2"/><circle cx="166" cy="64" r="2"/><circle cx="170" cy="68" r="2"/><circle cx="174" cy="72" r="2"/><circle cx="179" cy="76" r="2"/></g><path d="M220 89L219 82L213 84L216 79L211 76L217 75L216 70L221 73L223 70L225 75L231 73L228 79L231 83L224 82Z" fill="#6fc6bf"/><g fill="none" stroke="#ecd88a" stroke-width="0.700"><path d="M240 38Q234 50 238 72"/><ellipse cx="237" cy="44" rx="2" ry="4" transform="rotate(30 237 44)"/><ellipse cx="243" cy="48" rx="2" ry="4" transform="rotate(-30 243 48)"/><ellipse cx="235" cy="54" rx="2" ry="4" transform="rotate(30 235 54)"/><ellipse cx="242" cy="58" rx="2" ry="4" transform="rotate(-30 242 58)"/><ellipse cx="235" cy="64" rx="2" ry="4" transform="rotate(30 235 64)"/></g><path d="M210 57L217 50L224 55L218 64Z" fill="#f1e2b0"/><g fill="none" stroke="#7a9a5a" stroke-width="0.900" stroke-linecap="round"><path d="M222 118L224 101M224 118L230 106M226 119L235 112"/></g><path d="M228 2Q230 12 249 20" stroke="#e6d08a" stroke-width="0.500" stroke-dasharray="1.200 1.200" fill="none"/><path d="M0 112Q16 116 22 134" stroke="#e6d08a" stroke-width="0.500" stroke-dasharray="1.200 1.200" fill="none"/><g fill="#3a3a32"><circle cx="235.600" cy="9.600" r="1.700"/><circle cx="212" cy="3.600" r="1.100"/><circle cx="124.800" cy="4.700" r="0.900"/><circle cx="26.500" cy="101.700" r="1.300"/><circle cx="235.600" cy="96.600" r="1.400"/><circle cx="157" cy="117" r="0.900"/><circle cx="196" cy="70" r="0.700"/><circle cx="184" cy="89" r="0.700"/><circle cx="241" cy="83" r="0.800"/></g><circle cx="25.900" cy="112.300" r="1.500" fill="#6fb2c6"/><circle cx="0" cy="134" r="8" fill="#d9a536"/><path d="M70 6Q73 4 76 6Q79 8 82 6" stroke="#f0a0a0" stroke-width="0.600" fill="none"/><path d="M98 10Q102 8 106 11Q109 13 112 11" stroke="#f0b0a0" stroke-width="0.600" fill="none"/><text x="70.5" y="72.6" font-size="22.5" font-family="Liberation Serif, serif" fill="#dd8a56" textLength="43.7" lengthAdjust="spacingAndGlyphs" >Give</text><text x="59.4" y="103.0" font-size="22.5" font-family="Liberation Serif, serif" fill="#d9793f" textLength="66.3" lengthAdjust="spacingAndGlyphs" >Thanks</text><text x="92.5" y="89.0" font-size="4.6" font-family="Liberation Serif, serif" fill="#5a4a42" textLength="43.0" lengthAdjust="spacingAndGlyphs" text-anchor="middle" >Wishing you a great</text><text x="92.5" y="95.2" font-size="4.6" font-family="Liberation Serif, serif" fill="#8a7a6a" textLength="56.0" lengthAdjust="spacingAndGlyphs" text-anchor="middle" >Thanksgiving overflowing with</text><text x="92.3" y="121.3" font-size="4.4" font-family="Liberation Serif, serif" fill="#6a5a52" textLength="31.0" lengthAdjust="spacingAndGlyphs" text-anchor="middle" >Edward Brousset</text><text x="92.3" y="127.3" font-size="4.4" font-family="Liberation Serif, serif" fill="#7a6a62" textLength="29.0" lengthAdjust="spacingAndGlyphs" text-anchor="middle" >(703)-217-0690</text><text x="92.3" y="133.3" font-size="4.4" font-family="Liberation Serif, serif" fill="#6a5a52" textLength="33.0" lengthAdjust="spacingAndGlyphs" text-anchor="middle" >agent@gmail.com</text></svg><svg class="abs" style="left:1449.8px;top:717.2px" width="248.8" height="134.0" viewBox="0 0 248.8 134.0" ><defs><clipPath id="c10p"><circle cx="-14" cy="90" r="92"/></clipPath><filter id="b10"><feGaussianBlur stdDeviation="0.600"/></filter><filter id="n10" x="0" y="0" width="1" height="1"><feTurbulence type="fractalNoise" baseFrequency="0.900" numOctaves="2" seed="3"/><feColorMatrix values="0 0 0 0 1  0 0 0 0 1  0 0 0 0 1  0 0 0 0.350 0"/><feComposite in2="SourceGraphic" operator="in"/></filter></defs><rect width="248.800" height="134" fill="#cfcdc6"/><rect width="248.800" height="134" fill="#fff" filter="url(#n10)" opacity="0.500"/><g filter="url(#b10)"><circle cx="-14" cy="90" r="101" fill="#d6a552"/><circle cx="85.0" cy="90.0" r="8.500" fill="#e0b462"/><circle cx="83.8" cy="105.5" r="8.500" fill="#e0b462"/><circle cx="80.2" cy="120.6" r="8.500" fill="#e0b462"/><circle cx="74.2" cy="134.9" r="8.500" fill="#e0b462"/><circle cx="1.5" cy="-7.8" r="8.500" fill="#e0b462"/><circle cx="16.6" cy="-4.2" r="8.500" fill="#e0b462"/><circle cx="30.9" cy="1.8" r="8.500" fill="#e0b462"/><circle cx="44.2" cy="9.9" r="8.500" fill="#e0b462"/><circle cx="56.0" cy="20.0" r="8.500" fill="#e0b462"/><circle cx="66.1" cy="31.8" r="8.500" fill="#e0b462"/><circle cx="74.2" cy="45.1" r="8.500" fill="#e0b462"/><circle cx="80.2" cy="59.4" r="8.500" fill="#e0b462"/><circle cx="83.8" cy="74.5" r="8.500" fill="#e0b462"/><circle cx="-14" cy="90" r="86" fill="#3a2019"/><g clip-path="url(#c10p)"><rect x="-140" y="5" width="300" height="17.500" transform="rotate(40 20 70)" fill="#dfb466" stroke="#b98a44" stroke-width="0.800"/><rect x="-140" y="34" width="300" height="17.500" transform="rotate(40 20 70)" fill="#dfb466" stroke="#b98a44" stroke-width="0.800"/><rect x="-140" y="63" width="300" height="17.500" transform="rotate(40 20 70)" fill="#dfb466" stroke="#b98a44" stroke-width="0.800"/><rect x="-140" y="92" width="300" height="17.500" transform="rotate(40 20 70)" fill="#dfb466" stroke="#b98a44" stroke-width="0.800"/><rect x="-140" y="121" width="300" height="17.500" transform="rotate(40 20 70)" fill="#dfb466" stroke="#b98a44" stroke-width="0.800"/><rect x="-140" y="150" width="300" height="17.500" transform="rotate(40 20 70)" fill="#dfb466" stroke="#b98a44" stroke-width="0.800"/><rect x="-140" y="-12" width="300" height="18" transform="rotate(-47 20 70)" fill="#e8c27a" stroke="#bf9048" stroke-width="0.800"/><rect x="-140" y="18" width="300" height="18" transform="rotate(-47 20 70)" fill="#e8c27a" stroke="#bf9048" stroke-width="0.800"/><rect x="-140" y="48" width="300" height="18" transform="rotate(-47 20 70)" fill="#e8c27a" stroke="#bf9048" stroke-width="0.800"/><rect x="-140" y="78" width="300" height="18" transform="rotate(-47 20 70)" fill="#e8c27a" stroke="#bf9048" stroke-width="0.800"/><rect x="-140" y="108" width="300" height="18" transform="rotate(-47 20 70)" fill="#e8c27a" stroke="#bf9048" stroke-width="0.800"/><rect x="-140" y="138" width="300" height="18" transform="rotate(-47 20 70)" fill="#e8c27a" stroke="#bf9048" stroke-width="0.800"/></g></g><g fill="#3e241b"><ellipse cx="70" cy="3" rx="2.800" ry="8" transform="rotate(10 70 10.400)"/><ellipse cx="70" cy="3" rx="2.800" ry="8" transform="rotate(55 70 10.400)"/><ellipse cx="70" cy="3" rx="2.800" ry="8" transform="rotate(100 70 10.400)"/><ellipse cx="70" cy="3" rx="2.800" ry="8" transform="rotate(145 70 10.400)"/><ellipse cx="70" cy="3" rx="2.800" ry="8" transform="rotate(190 70 10.400)"/><ellipse cx="70" cy="3" rx="2.800" ry="8" transform="rotate(235 70 10.400)"/><ellipse cx="70" cy="3" rx="2.800" ry="8" transform="rotate(280 70 10.400)"/><ellipse cx="70" cy="3" rx="2.800" ry="8" transform="rotate(325 70 10.400)"/><circle cx="70" cy="10.400" r="3.500" fill="#5a3a2a"/></g><g fill="#2b2320"><circle cx="102.700" cy="14.200" r="3"/><circle cx="83.600" cy="34.400" r="3.400"/><circle cx="97.400" cy="40" r="3.200"/><circle cx="111.400" cy="28" r="1.900"/><circle cx="127" cy="40.300" r="2"/></g><g filter="url(#b10)"><path d="M115 0H170Q174 8 168 12Q174 18 170 24Q166 30 158 28Q158 36 150 38Q144 38 142 32Q134 30 136 22Q126 24 124 16Q118 10 115 0Z" fill="#c8924e"/><path d="M132 0L152 34M140 4L150 10M136 12L148 18M146 2L160 8M150 14L164 18" stroke="#e6c18a" stroke-width="0.700" fill="none"/></g><text x="141.2" y="63.0" font-size="22" font-family="Liberation Serif, serif" fill="#4a1c1a" textLength="43.3" lengthAdjust="spacingAndGlyphs" >Give</text><text x="130.3" y="93.4" font-size="22.3" font-family="Liberation Serif, serif" fill="#4a1c1a" textLength="65.4" lengthAdjust="spacingAndGlyphs" >Thanks</text><text x="162.8" y="79.0" font-size="4.6" font-family="Liberation Serif, serif" fill="#3a2a28" textLength="43.0" lengthAdjust="spacingAndGlyphs" text-anchor="middle" >Wishing you a great</text><text x="162.8" y="85.3" font-size="4.6" font-family="Liberation Serif, serif" fill="#7a5a58" textLength="56.0" lengthAdjust="spacingAndGlyphs" text-anchor="middle" >Thanksgiving overflowing with</text><text x="162.8" y="119.2" font-size="4.6" font-family="Liberation Serif, serif" fill="#6a4a48" textLength="31.0" lengthAdjust="spacingAndGlyphs" text-anchor="middle" >Edward Brousset</text><text x="162.8" y="126.8" font-size="4.6" font-family="Liberation Serif, serif" fill="#7a5a58" textLength="29.0" lengthAdjust="spacingAndGlyphs" text-anchor="middle" >(703)-217-0690</text><text x="162.8" y="133.2" font-size="4.6" font-family="Liberation Serif, serif" fill="#6a4a48" textLength="33.0" lengthAdjust="spacingAndGlyphs" text-anchor="middle" >agent@gmail.com</text></svg><div class="abs" style="left:0;top:851px;width:1916px;height:2px;background:#adabad"></div></div></body></html>
